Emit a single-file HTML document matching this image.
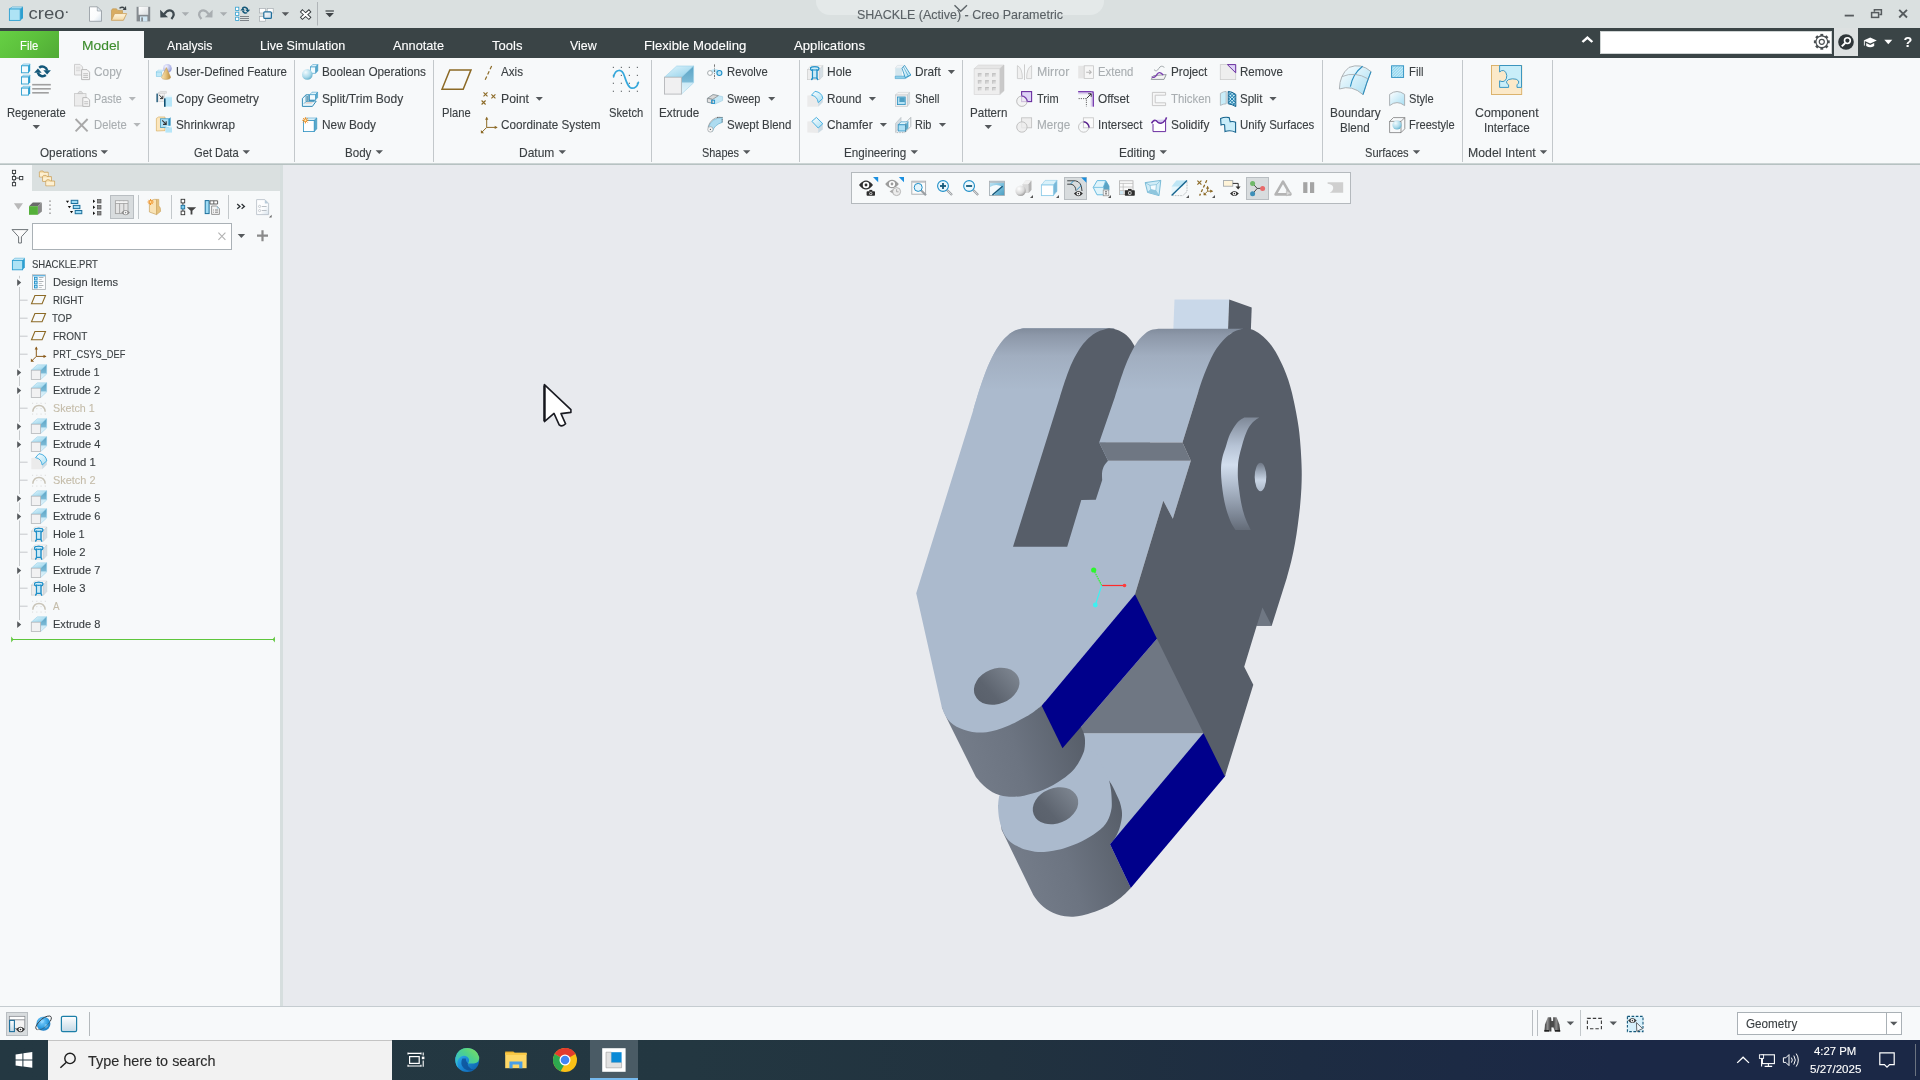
<!DOCTYPE html>
<html><head><meta charset="utf-8"><title>SHACKLE (Active) - Creo Parametric</title>
<style>
html,body{margin:0;padding:0;}
body{width:1920px;height:1080px;overflow:hidden;position:relative;background:#e8eaee;font-family:"Liberation Sans",sans-serif;}
.t{position:absolute;white-space:nowrap;line-height:20px;transform-origin:0 50%;-webkit-text-stroke:0.12px currentColor;font-family:"Liberation Sans",sans-serif;}
svg{position:absolute;left:0;top:0;}
</style></head><body>
<div id="app" style="position:absolute;left:0;top:0;width:1920px;height:1080px;overflow:hidden;will-change:transform">
<div style="position:absolute;left:0px;top:0px;width:1920px;height:28px;background:#dae0e0;"></div>
<div style="position:absolute;left:816px;top:-14px;width:288px;height:29px;background:#e4e9e9;border-radius:14px;"></div>
<div style="position:absolute;left:0px;top:28px;width:1920px;height:30px;background:#3a4446;"></div>
<div style="position:absolute;left:0px;top:31px;width:59px;height:27px;background:linear-gradient(135deg,#66d044 0%,#5cc03c 50%,#50aa36 100%);"></div>
<div style="position:absolute;left:59px;top:31px;width:85px;height:27px;background:#f7f9fa;"></div>
<div style="position:absolute;left:0px;top:58px;width:1920px;height:105px;background:#f7f9fa;"></div>
<div style="position:absolute;left:0px;top:163px;width:1920px;height:2px;background:linear-gradient(180deg,#dfe5e5 0%,#b4c0c0 55%,#b9c4c4 100%);"></div>
<div style="position:absolute;left:148px;top:60px;width:1px;height:102px;background:#c3c8cb;"></div>
<div style="position:absolute;left:294px;top:60px;width:1px;height:102px;background:#c3c8cb;"></div>
<div style="position:absolute;left:433px;top:60px;width:1px;height:102px;background:#c3c8cb;"></div>
<div style="position:absolute;left:651px;top:60px;width:1px;height:102px;background:#c3c8cb;"></div>
<div style="position:absolute;left:799px;top:60px;width:1px;height:102px;background:#c3c8cb;"></div>
<div style="position:absolute;left:962px;top:60px;width:1px;height:102px;background:#c3c8cb;"></div>
<div style="position:absolute;left:1322px;top:60px;width:1px;height:102px;background:#c3c8cb;"></div>
<div style="position:absolute;left:1462px;top:60px;width:1px;height:102px;background:#c3c8cb;"></div>
<div style="position:absolute;left:1552px;top:60px;width:1px;height:102px;background:#c3c8cb;"></div>
<div style="position:absolute;left:1600px;top:31px;width:232px;height:23px;background:#ffffff;border:1px solid #cfd4d4;box-sizing:border-box;"></div>
<div style="position:absolute;left:1834px;top:28px;width:24px;height:28px;background:#dde1e1;"></div>
<div style="position:absolute;left:0px;top:165px;width:280px;height:841px;background:#f7f9fa;"></div>
<div style="position:absolute;left:32px;top:165px;width:248px;height:26px;background:#dae0e0;"></div>
<div style="position:absolute;left:280px;top:165px;width:3px;height:841px;background:#d6dede;"></div>
<div style="position:absolute;left:110px;top:195px;width:24px;height:24px;background:#d8dcde;border:1px solid #b9bec2;box-sizing:border-box;"></div>
<div style="position:absolute;left:138px;top:195px;width:1px;height:24px;background:#c3c8cb;"></div>
<div style="position:absolute;left:171px;top:195px;width:1px;height:24px;background:#c3c8cb;"></div>
<div style="position:absolute;left:228px;top:195px;width:1px;height:24px;background:#c3c8cb;"></div>
<div style="position:absolute;left:32px;top:223px;width:200px;height:27px;background:#ffffff;border:1px solid #aab1b6;box-sizing:border-box;"></div>
<div style="position:absolute;left:283px;top:165px;width:1637px;height:841px;background:#e8eaee;"></div>
<div style="position:absolute;left:851px;top:172px;width:500px;height:32px;background:#f7f9fa;border:1px solid #b4b9bd;box-sizing:border-box;"></div>
<div style="position:absolute;left:1064px;top:177px;width:23px;height:23px;background:#d8dcde;border:1px solid #b9bec2;box-sizing:border-box;"></div>
<div style="position:absolute;left:1246px;top:177px;width:23px;height:23px;background:#d8dcde;border:1px solid #b9bec2;box-sizing:border-box;"></div>
<div style="position:absolute;left:0px;top:1006px;width:1920px;height:34px;background:#f7f9fa;"></div>
<div style="position:absolute;left:0px;top:1006px;width:1920px;height:1px;background:#c5ccd0;"></div>
<div style="position:absolute;left:6px;top:1012px;width:22px;height:24px;background:#d8dcde;border:1px solid #b9bec2;box-sizing:border-box;"></div>
<div style="position:absolute;left:89px;top:1012px;width:1px;height:24px;background:#b4b9bc;"></div>
<div style="position:absolute;left:1532px;top:1010px;width:1px;height:26px;background:#b9bec2;"></div>
<div style="position:absolute;left:1537px;top:1010px;width:1px;height:26px;background:#b9bec2;"></div>
<div style="position:absolute;left:1580px;top:1010px;width:1px;height:26px;background:#c3c8cb;"></div>
<div style="position:absolute;left:1737px;top:1012px;width:165px;height:23px;background:#ffffff;border:1px solid #aab1b6;box-sizing:border-box;"></div>
<div style="position:absolute;left:1886px;top:1013px;width:1px;height:21px;background:#aab1b6;"></div>
<div style="position:absolute;left:0px;top:1040px;width:1920px;height:40px;background:linear-gradient(90deg,#243842 0%,#233741 36%,#21323f 52%,#1d2c42 68%,#1b2846 84%,#1b2846 100%);"></div>
<div style="position:absolute;left:48px;top:1040px;width:344px;height:40px;background:#f2f2f2;border-top:1px solid #c4c4c4;box-sizing:border-box;"></div>
<div style="position:absolute;left:590px;top:1040px;width:48px;height:40px;background:#4a5b65;"></div>
<div style="position:absolute;left:590px;top:1078px;width:48px;height:2px;background:#76b9ed;"></div>
<div style="position:absolute;left:1915px;top:1044px;width:1px;height:32px;background:#6b7380;"></div>
<span class="t" style="left:857.0px;top:5.1px;font-size:12.2px;color:#5a6165;transform:scaleX(1.0246);">SHACKLE (Active) - Creo Parametric</span>
<span class="t" style="left:20.0px;top:35.5px;font-size:13.1px;color:#ffffff;transform:scaleX(0.8669);">File</span>
<span class="t" style="left:82.3px;top:35.5px;font-size:13.1px;color:#3c8c2c;transform:scaleX(1.0566);">Model</span>
<span class="t" style="left:167.3px;top:35.5px;font-size:13.1px;color:#ffffff;transform:scaleX(0.9307);">Analysis</span>
<span class="t" style="left:260.3px;top:35.5px;font-size:13.1px;color:#ffffff;transform:scaleX(0.9613);">Live Simulation</span>
<span class="t" style="left:393.3px;top:35.5px;font-size:13.1px;color:#ffffff;transform:scaleX(0.9724);">Annotate</span>
<span class="t" style="left:492.3px;top:35.5px;font-size:13.1px;color:#ffffff;transform:scaleX(0.9941);">Tools</span>
<span class="t" style="left:570.0px;top:35.5px;font-size:13.1px;color:#ffffff;transform:scaleX(0.9482);">View</span>
<span class="t" style="left:644.3px;top:35.5px;font-size:13.1px;color:#ffffff;transform:scaleX(1.0045);">Flexible Modeling</span>
<span class="t" style="left:794.0px;top:35.5px;font-size:13.1px;color:#ffffff;transform:scaleX(1.0051);">Applications</span>
<span class="t" style="left:7.3px;top:102.8px;font-size:12.2px;color:#3a3f42;transform:scaleX(0.9207);">Regenerate</span>
<span class="t" style="left:94.3px;top:61.8px;font-size:12.2px;color:#a9aeb1;transform:scaleX(0.9726);">Copy</span>
<span class="t" style="left:94.3px;top:88.8px;font-size:12.2px;color:#a9aeb1;transform:scaleX(0.8879);">Paste</span>
<span class="t" style="left:94.3px;top:114.8px;font-size:12.2px;color:#a9aeb1;transform:scaleX(0.9272);">Delete</span>
<span class="t" style="left:176.0px;top:61.8px;font-size:12.2px;color:#3a3f42;transform:scaleX(0.9462);">User-Defined Feature</span>
<span class="t" style="left:176.0px;top:88.8px;font-size:12.2px;color:#3a3f42;transform:scaleX(0.9716);">Copy Geometry</span>
<span class="t" style="left:176.0px;top:114.8px;font-size:12.2px;color:#3a3f42;transform:scaleX(0.9668);">Shrinkwrap</span>
<span class="t" style="left:322.0px;top:61.8px;font-size:12.2px;color:#3a3f42;transform:scaleX(0.9644);">Boolean Operations</span>
<span class="t" style="left:322.0px;top:88.8px;font-size:12.2px;color:#3a3f42;transform:scaleX(0.9884);">Split/Trim Body</span>
<span class="t" style="left:322.0px;top:114.8px;font-size:12.2px;color:#3a3f42;transform:scaleX(0.9712);">New Body</span>
<span class="t" style="left:442.3px;top:102.8px;font-size:12.2px;color:#3a3f42;transform:scaleX(0.9198);">Plane</span>
<span class="t" style="left:501.0px;top:61.8px;font-size:12.2px;color:#3a3f42;transform:scaleX(0.9545);">Axis</span>
<span class="t" style="left:501.0px;top:88.8px;font-size:12.2px;color:#3a3f42;transform:scaleX(1.0069);">Point</span>
<span class="t" style="left:501.0px;top:114.8px;font-size:12.2px;color:#3a3f42;transform:scaleX(0.9610);">Coordinate System</span>
<span class="t" style="left:609.0px;top:102.8px;font-size:12.2px;color:#3a3f42;transform:scaleX(0.9196);">Sketch</span>
<span class="t" style="left:659.0px;top:102.8px;font-size:12.2px;color:#3a3f42;transform:scaleX(0.9585);">Extrude</span>
<span class="t" style="left:727.3px;top:61.8px;font-size:12.2px;color:#3a3f42;transform:scaleX(0.9234);">Revolve</span>
<span class="t" style="left:727.3px;top:88.8px;font-size:12.2px;color:#3a3f42;transform:scaleX(0.8954);">Sweep</span>
<span class="t" style="left:727.3px;top:114.8px;font-size:12.2px;color:#3a3f42;transform:scaleX(0.9401);">Swept Blend</span>
<span class="t" style="left:827.3px;top:61.8px;font-size:12.2px;color:#3a3f42;transform:scaleX(0.9844);">Hole</span>
<span class="t" style="left:827.3px;top:88.8px;font-size:12.2px;color:#3a3f42;transform:scaleX(0.9569);">Round</span>
<span class="t" style="left:827.3px;top:114.8px;font-size:12.2px;color:#3a3f42;transform:scaleX(0.9769);">Chamfer</span>
<span class="t" style="left:915.3px;top:61.8px;font-size:12.2px;color:#3a3f42;transform:scaleX(0.9721);">Draft</span>
<span class="t" style="left:915.3px;top:88.8px;font-size:12.2px;color:#3a3f42;transform:scaleX(0.8994);">Shell</span>
<span class="t" style="left:915.3px;top:114.8px;font-size:12.2px;color:#3a3f42;transform:scaleX(0.8959);">Rib</span>
<span class="t" style="left:970.3px;top:102.8px;font-size:12.2px;color:#3a3f42;transform:scaleX(0.9508);">Pattern</span>
<span class="t" style="left:1036.7px;top:61.8px;font-size:12.2px;color:#a9aeb1;transform:scaleX(1.0142);">Mirror</span>
<span class="t" style="left:1036.7px;top:88.8px;font-size:12.2px;color:#3a3f42;transform:scaleX(0.9024);">Trim</span>
<span class="t" style="left:1036.7px;top:114.8px;font-size:12.2px;color:#a9aeb1;transform:scaleX(0.9630);">Merge</span>
<span class="t" style="left:1098.3px;top:61.8px;font-size:12.2px;color:#a9aeb1;transform:scaleX(0.9320);">Extend</span>
<span class="t" style="left:1098.3px;top:88.8px;font-size:12.2px;color:#3a3f42;transform:scaleX(0.9715);">Offset</span>
<span class="t" style="left:1098.3px;top:114.8px;font-size:12.2px;color:#3a3f42;transform:scaleX(0.9490);">Intersect</span>
<span class="t" style="left:1171.3px;top:61.8px;font-size:12.2px;color:#3a3f42;transform:scaleX(0.9586);">Project</span>
<span class="t" style="left:1171.3px;top:88.8px;font-size:12.2px;color:#a9aeb1;transform:scaleX(0.9364);">Thicken</span>
<span class="t" style="left:1171.3px;top:114.8px;font-size:12.2px;color:#3a3f42;transform:scaleX(0.9764);">Solidify</span>
<span class="t" style="left:1240.3px;top:61.8px;font-size:12.2px;color:#3a3f42;transform:scaleX(0.9465);">Remove</span>
<span class="t" style="left:1240.3px;top:88.8px;font-size:12.2px;color:#3a3f42;transform:scaleX(0.9438);">Split</span>
<span class="t" style="left:1240.3px;top:114.8px;font-size:12.2px;color:#3a3f42;transform:scaleX(0.9379);">Unify Surfaces</span>
<span class="t" style="left:1330.3px;top:102.8px;font-size:12.2px;color:#3a3f42;transform:scaleX(0.9708);">Boundary</span>
<span class="t" style="left:1340.3px;top:117.8px;font-size:12.2px;color:#3a3f42;transform:scaleX(0.9518);">Blend</span>
<span class="t" style="left:1409.3px;top:61.8px;font-size:12.2px;color:#3a3f42;transform:scaleX(0.9240);">Fill</span>
<span class="t" style="left:1409.3px;top:88.8px;font-size:12.2px;color:#3a3f42;transform:scaleX(0.9107);">Style</span>
<span class="t" style="left:1409.3px;top:114.8px;font-size:12.2px;color:#3a3f42;transform:scaleX(0.9109);">Freestyle</span>
<span class="t" style="left:1475.3px;top:102.8px;font-size:12.2px;color:#3a3f42;transform:scaleX(1.0099);">Component</span>
<span class="t" style="left:1484.3px;top:117.8px;font-size:12.2px;color:#3a3f42;transform:scaleX(0.9627);">Interface</span>
<span class="t" style="left:40.3px;top:142.8px;font-size:12.2px;color:#3a3f42;transform:scaleX(0.9618);">Operations</span>
<span class="t" style="left:194.3px;top:142.8px;font-size:12.2px;color:#3a3f42;transform:scaleX(0.9155);">Get Data</span>
<span class="t" style="left:345.3px;top:142.8px;font-size:12.2px;color:#3a3f42;transform:scaleX(0.9494);">Body</span>
<span class="t" style="left:519.3px;top:142.8px;font-size:12.2px;color:#3a3f42;transform:scaleX(0.9852);">Datum</span>
<span class="t" style="left:702.0px;top:142.8px;font-size:12.2px;color:#3a3f42;transform:scaleX(0.8942);">Shapes</span>
<span class="t" style="left:844.3px;top:142.8px;font-size:12.2px;color:#3a3f42;transform:scaleX(0.9583);">Engineering</span>
<span class="t" style="left:1119.3px;top:142.8px;font-size:12.2px;color:#3a3f42;transform:scaleX(0.9758);">Editing</span>
<span class="t" style="left:1365.3px;top:142.8px;font-size:12.2px;color:#3a3f42;transform:scaleX(0.9077);">Surfaces</span>
<span class="t" style="left:1468.3px;top:142.8px;font-size:12.2px;color:#3a3f42;transform:scaleX(1.0083);">Model Intent</span>
<span class="t" style="left:32.3px;top:254.1px;font-size:10.8px;color:#3a3f42;transform:scaleX(0.8807);">SHACKLE.PRT</span>
<span class="t" style="left:52.5px;top:272.1px;font-size:10.8px;color:#3a3f42;transform:scaleX(1.0314);">Design Items</span>
<span class="t" style="left:52.5px;top:290.1px;font-size:10.8px;color:#3a3f42;transform:scaleX(0.9048);">RIGHT</span>
<span class="t" style="left:52.1px;top:308.1px;font-size:10.8px;color:#3a3f42;transform:scaleX(0.9088);">TOP</span>
<span class="t" style="left:52.5px;top:326.1px;font-size:10.8px;color:#3a3f42;transform:scaleX(0.9249);">FRONT</span>
<span class="t" style="left:52.5px;top:344.1px;font-size:10.8px;color:#3a3f42;transform:scaleX(0.8575);">PRT_CSYS_DEF</span>
<span class="t" style="left:52.5px;top:362.1px;font-size:10.8px;color:#3a3f42;transform:scaleX(1.0081);">Extrude 1</span>
<span class="t" style="left:52.5px;top:380.1px;font-size:10.8px;color:#3a3f42;transform:scaleX(1.0189);">Extrude 2</span>
<span class="t" style="left:52.5px;top:398.1px;font-size:10.8px;color:#c4bca9;transform:scaleX(0.9923);">Sketch 1</span>
<span class="t" style="left:52.5px;top:416.1px;font-size:10.8px;color:#3a3f42;transform:scaleX(1.0232);">Extrude 3</span>
<span class="t" style="left:52.5px;top:434.1px;font-size:10.8px;color:#3a3f42;transform:scaleX(1.0232);">Extrude 4</span>
<span class="t" style="left:52.5px;top:452.1px;font-size:10.8px;color:#3a3f42;transform:scaleX(1.0457);">Round 1</span>
<span class="t" style="left:52.5px;top:470.1px;font-size:10.8px;color:#c4bca9;transform:scaleX(1.0113);">Sketch 2</span>
<span class="t" style="left:52.5px;top:488.1px;font-size:10.8px;color:#3a3f42;transform:scaleX(1.0232);">Extrude 5</span>
<span class="t" style="left:52.5px;top:506.1px;font-size:10.8px;color:#3a3f42;transform:scaleX(1.0232);">Extrude 6</span>
<span class="t" style="left:52.5px;top:524.1px;font-size:10.8px;color:#3a3f42;transform:scaleX(1.0154);">Hole 1</span>
<span class="t" style="left:52.5px;top:542.1px;font-size:10.8px;color:#3a3f42;transform:scaleX(1.0410);">Hole 2</span>
<span class="t" style="left:52.5px;top:560.1px;font-size:10.8px;color:#3a3f42;transform:scaleX(1.0232);">Extrude 7</span>
<span class="t" style="left:52.5px;top:578.1px;font-size:10.8px;color:#3a3f42;transform:scaleX(1.0410);">Hole 3</span>
<span class="t" style="left:52.5px;top:596.1px;font-size:10.8px;color:#c4bca9;transform:scaleX(0.9023);">A</span>
<span class="t" style="left:52.5px;top:614.1px;font-size:10.8px;color:#3a3f42;transform:scaleX(1.0232);">Extrude 8</span>
<span class="t" style="left:1745.5px;top:1013.5px;font-size:12.2px;color:#3a3f42;transform:scaleX(0.9597);">Geometry</span>
<span class="t" style="left:88.2px;top:1050.9px;font-size:14.5px;color:#2b2b2b;transform:scaleX(0.9941);">Type here to search</span>
<span class="t" style="left:1813.9px;top:1041.0px;font-size:11.6px;color:#ffffff;transform:scaleX(0.9792);">4:27 PM</span>
<span class="t" style="left:1809.6px;top:1058.7px;font-size:11.6px;color:#ffffff;transform:scaleX(0.9960);">5/27/2025</span>
<svg width="1920" height="1080" viewBox="0 0 1920 1080">
<defs>
<linearGradient id="gTop" gradientUnits="userSpaceOnUse" x1="0" y1="328" x2="0" y2="390"><stop offset="0" stop-color="#808b9b"/><stop offset="0.12" stop-color="#8d98a9"/><stop offset="0.45" stop-color="#a1aec0"/><stop offset="1" stop-color="#abbacd"/></linearGradient>
<linearGradient id="gBoss" gradientUnits="userSpaceOnUse" x1="0" y1="417" x2="0" y2="531"><stop offset="0" stop-color="#7d8796"/><stop offset="0.25" stop-color="#b6c3d5"/><stop offset="0.42" stop-color="#d2deee"/><stop offset="0.6" stop-color="#b0bccd"/><stop offset="0.85" stop-color="#7f8998"/><stop offset="1" stop-color="#626a76"/></linearGradient>
<linearGradient id="gHole3" gradientUnits="userSpaceOnUse" x1="0" y1="462" x2="0" y2="492"><stop offset="0" stop-color="#6a7280"/><stop offset="0.3" stop-color="#9aa6b6"/><stop offset="0.6" stop-color="#c9d5e5"/><stop offset="1" stop-color="#aab6c7"/></linearGradient>
<linearGradient id="gCyl1" gradientUnits="userSpaceOnUse" x1="955" y1="760" x2="1085" y2="722"><stop offset="0" stop-color="#757d8a"/><stop offset="0.45" stop-color="#6c7481"/><stop offset="1" stop-color="#565d68"/></linearGradient>
<linearGradient id="gCyl2" gradientUnits="userSpaceOnUse" x1="1015" y1="880" x2="1135" y2="845"><stop offset="0" stop-color="#757d8a"/><stop offset="0.45" stop-color="#6c7481"/><stop offset="1" stop-color="#575e69"/></linearGradient>
<linearGradient id="gH1" gradientUnits="userSpaceOnUse" x1="976" y1="694" x2="1018" y2="678"><stop offset="0" stop-color="#5a616c"/><stop offset="0.3" stop-color="#5d646f"/><stop offset="1" stop-color="#7c848f"/></linearGradient>
<linearGradient id="gH2" gradientUnits="userSpaceOnUse" x1="1035" y1="814" x2="1077" y2="798"><stop offset="0" stop-color="#5a616c"/><stop offset="0.3" stop-color="#5d646f"/><stop offset="1" stop-color="#7c848f"/></linearGradient>
</defs>
<g>
<polygon points="1174.5,299.5 1229.2,299.5 1228,330 1173.3,330" fill="#c9d8e9"/>
<polygon points="1229.2,299.5 1251.7,307.5 1250.8,332 1228,331" fill="#575e69"/>
<polygon points="1070,733.3 1205.5,733.3 1205.5,737 1110,844.2 1100,800 1075,760" fill="#abbacd"/>
<polygon points="1158,637.5 1205.5,733.3 1070,733.3 1062.5,748.3" fill="#6f7783"/>
<path d="M998.3,805.0 L1001.7,830.0 L1033.3,895.0 C1034.1,896.1 1036.3,899.5 1038.0,901.5 C1039.7,903.5 1041.4,905.1 1043.3,906.7 C1045.2,908.3 1047.3,909.8 1049.5,911.0 C1051.7,912.2 1054.1,913.3 1056.7,914.2 C1059.3,915.1 1062.2,915.9 1065.0,916.3 C1067.8,916.7 1070.5,916.8 1073.3,916.7 C1076.1,916.6 1079.2,916.2 1082.0,915.6 C1084.8,915.0 1087.0,914.3 1090.0,913.3 C1093.0,912.3 1096.7,911.1 1100.0,909.7 C1103.3,908.3 1106.5,907.0 1110.0,905.0 C1113.5,903.0 1117.5,900.3 1121.0,897.5 C1124.5,894.7 1129.2,889.6 1130.8,888.0 L1110.0,844.2 C1110.7,843.4 1112.9,841.0 1114.0,839.5 C1115.1,838.0 1115.8,836.8 1116.7,835.0 C1117.6,833.2 1118.6,831.0 1119.3,829.0 C1120.0,827.0 1120.4,825.3 1120.8,823.3 C1121.2,821.3 1121.8,819.2 1121.9,817.0 C1122.1,814.8 1122.1,812.5 1121.7,810.0 C1121.3,807.5 1120.6,804.5 1119.8,802.0 C1119.0,799.5 1117.8,797.4 1116.7,795.0 C1115.6,792.6 1114.5,789.9 1113.2,787.5 C1112.0,785.1 1109.9,781.9 1109.2,780.8 Z" fill="url(#gCyl2)"/>
<path d="M999.2,795.8 C999.0,797.1 998.4,800.9 998.2,803.5 C998.1,806.1 998.1,808.9 998.3,811.7 C998.5,814.5 998.9,817.7 999.5,820.5 C1000.1,823.3 1000.9,825.9 1001.7,828.3 C1002.5,830.7 1003.4,832.8 1004.5,834.8 C1005.6,836.8 1006.9,838.5 1008.3,840.0 C1009.7,841.5 1011.1,842.7 1012.8,843.8 C1014.5,844.9 1016.1,845.7 1018.3,846.7 C1020.5,847.7 1023.2,849.0 1026.0,849.8 C1028.8,850.6 1032.0,851.3 1035.0,851.7 C1038.0,852.1 1041.0,852.1 1044.0,852.0 C1047.0,851.9 1050.0,851.4 1053.3,850.8 C1056.5,850.2 1060.2,849.6 1063.5,848.6 C1066.8,847.6 1070.2,846.2 1073.3,845.0 C1076.4,843.8 1079.2,842.6 1082.0,841.2 C1084.8,839.8 1087.5,838.2 1090.0,836.7 C1092.5,835.2 1094.8,833.7 1097.0,832.0 C1099.2,830.3 1101.6,828.5 1103.3,826.7 C1105.0,824.9 1106.2,823.2 1107.3,821.3 C1108.4,819.3 1109.3,817.2 1110.0,815.0 C1110.7,812.8 1111.3,810.5 1111.6,808.0 C1111.9,805.5 1111.8,803.0 1111.7,800.0 C1111.6,797.0 1111.4,793.2 1111.0,790.0 C1110.6,786.8 1109.5,782.3 1109.2,780.8 L1095.0,750.0 L1040.0,770.0 Z" fill="#abbacd"/>
<path d="M941.7,706.7 L946.7,718.3 L975.8,776.7 C976.7,777.8 979.2,781.1 981.0,783.0 C982.8,784.9 984.8,786.8 986.7,788.3 C988.6,789.8 990.4,791.1 992.5,792.2 C994.6,793.3 996.8,794.3 999.2,795.0 C1001.6,795.7 1004.4,796.3 1007.0,796.6 C1009.6,796.9 1012.2,796.9 1015.0,796.7 C1017.8,796.6 1021.0,796.3 1024.0,795.7 C1027.0,795.1 1030.0,794.3 1033.3,793.3 C1036.5,792.3 1040.2,791.1 1043.5,789.7 C1046.8,788.3 1050.0,786.8 1053.3,785.0 C1056.5,783.2 1059.9,781.0 1063.0,778.8 C1066.1,776.6 1069.3,774.1 1071.7,771.7 C1074.1,769.3 1075.8,767.0 1077.5,764.5 C1079.2,762.0 1080.6,759.1 1081.7,756.7 C1082.8,754.3 1083.8,752.2 1084.3,750.0 C1084.8,747.8 1084.9,745.5 1085.0,743.3 C1085.1,741.1 1085.0,738.9 1084.7,737.0 C1084.4,735.1 1083.5,732.6 1083.3,731.7 L1075.0,715.0 L1041.7,700.0 Z" fill="url(#gCyl1)"/>
<path d="M1109.2,328.3 L1023.3,328.3 C1021.9,328.7 1017.5,329.5 1015.0,330.6 C1012.5,331.7 1010.5,333.1 1008.3,335.0 C1006.1,336.9 1003.9,338.9 1001.7,341.7 C999.5,344.5 997.1,348.1 995.0,351.7 C992.9,355.3 991.2,358.9 989.2,363.3 C987.2,367.7 985.1,373.3 983.3,378.3 C981.5,383.3 980.0,388.0 978.3,393.3 C976.6,398.6 974.1,407.2 973.3,410.0 L916.2,593.3 L941.7,706.7 C942.2,707.9 943.4,711.8 944.5,714.0 C945.6,716.2 946.8,718.2 948.3,720.0 C949.8,721.8 951.5,723.4 953.5,724.8 C955.5,726.2 957.6,727.3 960.0,728.3 C962.4,729.3 965.2,730.3 968.0,731.0 C970.8,731.7 973.6,732.3 976.7,732.5 C979.8,732.7 983.2,732.6 986.5,732.2 C989.8,731.8 993.3,731.0 996.7,730.0 C1000.1,729.0 1003.7,727.7 1007.0,726.3 C1010.3,724.9 1013.8,723.2 1016.7,721.7 C1019.6,720.2 1022.0,719.0 1024.5,717.6 C1027.0,716.2 1028.8,715.3 1031.7,713.3 C1034.6,711.3 1040.0,707.0 1041.7,705.8 L1135.0,594.2 L1163.3,500.8 L1172.8,518.7 L1190.8,460.8 L1108.0,460.8 L1100.0,400.0 Z" fill="#abbacd"/>
<path d="M1115.0,328.3 L1023.3,328.3 C1021.9,328.7 1017.5,329.5 1015.0,330.6 C1012.5,331.7 1010.5,333.1 1008.3,335.0 C1006.1,336.9 1003.9,338.9 1001.7,341.7 C999.5,344.5 997.1,348.1 995.0,351.7 C992.9,355.3 991.2,358.9 989.2,363.3 C987.2,367.7 985.1,373.3 983.3,378.3 C981.5,383.3 980.0,388.0 978.3,393.3 C976.6,398.6 974.1,407.2 973.3,410.0 L1060.0,410.0 L1090.0,340.0 Z" fill="url(#gTop)"/>
<path d="M1109.2,328.3 C1110.3,328.5 1113.9,329.0 1116.0,329.6 C1118.1,330.2 1120.0,331.1 1121.7,332.0 C1123.5,332.9 1125.0,334.0 1126.5,335.3 C1128.0,336.6 1129.4,338.1 1130.8,340.0 C1132.2,341.9 1134.3,345.6 1135.0,346.7 L1150.0,346.0 L1150.0,442.5 L1099.2,442.5 L1108.0,460.8 C1107.3,461.7 1105.0,464.2 1104.0,466.0 C1103.0,467.8 1102.5,470.0 1102.2,471.7 C1101.9,473.4 1102.0,474.6 1102.0,476.0 C1102.0,477.4 1102.2,479.3 1102.2,480.0 L1095.8,499.7 L1081.3,500.0 L1067.2,546.8 L1013.0,546.8 L1060.0,396.7 C1060.7,394.5 1062.8,387.5 1064.2,383.3 C1065.6,379.1 1066.8,375.6 1068.3,371.7 C1069.8,367.8 1071.3,363.9 1073.3,360.0 C1075.2,356.1 1077.8,351.6 1080.0,348.3 C1082.2,345.0 1084.2,342.5 1086.7,340.0 C1089.2,337.5 1092.5,334.9 1095.0,333.3 C1097.5,331.7 1099.3,331.1 1101.7,330.3 C1104.1,329.5 1108.0,328.6 1109.2,328.3 Z" fill="#575e69"/>
<path d="M1243.3,328.7 L1158.3,328.7 C1157.1,328.9 1153.2,329.2 1151.0,330.0 C1148.8,330.8 1146.9,332.2 1145.0,333.7 C1143.1,335.2 1141.2,337.0 1139.5,339.0 C1137.8,341.0 1136.6,342.8 1135.0,345.5 C1133.4,348.2 1131.7,351.5 1130.0,355.0 C1128.3,358.5 1126.7,362.4 1125.0,366.7 C1123.3,371.0 1121.7,376.0 1120.0,381.0 C1118.3,386.0 1115.8,394.1 1115.0,396.7 L1099.2,442.5 L1182.5,442.5 L1198.3,391.7 L1230.0,334.0 Z" fill="url(#gTop)"/>
<polygon points="1099.2,442.5 1182.5,442.5 1190.8,460.8 1108,460.8" fill="#6f7783"/>
<polygon points="1135,594.2 1137.2,594.2 1158,637.5 1062.5,748.3 1041.7,705.8" fill="#00008b"/>
<polygon points="1203.3,733.3 1205.5,733.3 1225.2,775.4 1224.9,776.5 1130.8,888 1110,844.2" fill="#00008b"/>
<path d="M1243.3,328.7 C1244.2,328.7 1246.8,328.7 1248.5,328.9 C1250.2,329.1 1251.4,329.1 1253.3,330.0 C1255.2,330.9 1257.8,332.3 1260.0,334.0 C1262.2,335.7 1264.6,337.8 1266.7,340.0 C1268.8,342.2 1270.9,344.7 1272.8,347.5 C1274.7,350.3 1276.5,353.3 1278.3,356.7 C1280.1,360.1 1282.0,364.1 1283.7,368.0 C1285.4,371.9 1286.9,375.8 1288.3,380.0 C1289.7,384.2 1290.9,388.6 1292.0,393.0 C1293.1,397.4 1294.1,402.4 1295.0,406.7 C1295.9,411.0 1296.6,414.8 1297.3,419.0 C1298.0,423.2 1298.6,426.5 1299.2,431.7 C1299.8,436.9 1300.4,443.6 1300.8,450.0 C1301.2,456.4 1301.6,463.7 1301.7,470.0 C1301.8,476.3 1301.7,481.9 1301.4,488.0 C1301.1,494.1 1300.6,500.5 1300.0,506.7 C1299.4,512.9 1298.6,518.9 1297.8,525.0 C1297.0,531.1 1296.1,537.3 1295.0,543.3 C1293.9,549.3 1292.7,555.2 1291.3,561.0 C1289.9,566.8 1287.5,575.4 1286.7,578.3 L1271.7,625.8 L1256.7,625.8 L1244.2,666.7 L1253.3,684.7 L1224.9,776.5 L1135.0,594.2 L1163.3,500.8 L1172.8,518.7 L1190.8,460.8 L1182.5,442.5 L1198.3,391.7 C1199.0,389.7 1200.9,383.4 1202.3,379.5 C1203.7,375.6 1205.2,371.9 1206.7,368.3 C1208.2,364.7 1209.6,361.1 1211.3,357.8 C1213.0,354.5 1214.8,351.2 1216.7,348.3 C1218.7,345.4 1220.8,342.9 1223.0,340.5 C1225.2,338.1 1227.8,335.8 1230.0,334.2 C1232.2,332.6 1234.3,331.5 1236.5,330.6 C1238.7,329.7 1242.2,329.0 1243.3,328.7 Z" fill="#575e69"/>
<polygon points="1262.5,607.5 1271.7,625.8 1256.7,625.8" fill="#6f7783"/>
<path d="M1244.2,417.5 L1259.2,417.5 C1258.2,418.2 1254.8,420.2 1253.0,422.0 C1251.2,423.8 1249.7,425.8 1248.3,428.3 C1246.9,430.8 1245.7,433.9 1244.6,437.0 C1243.5,440.1 1242.6,443.5 1241.7,446.7 C1240.8,449.9 1239.9,452.9 1239.3,456.0 C1238.7,459.1 1238.2,461.3 1238.0,465.0 C1237.8,468.7 1237.7,473.8 1237.9,478.0 C1238.1,482.2 1238.7,486.2 1239.2,490.0 C1239.7,493.8 1240.1,497.4 1240.8,501.0 C1241.5,504.6 1242.3,508.4 1243.3,511.7 C1244.2,515.0 1245.2,518.0 1246.5,521.0 C1247.8,524.0 1250.1,528.5 1250.8,530.0 L1235.5,530.0 C1234.8,528.8 1232.3,525.3 1231.0,522.5 C1229.7,519.7 1228.6,516.7 1227.5,513.3 C1226.4,509.9 1225.3,505.9 1224.5,502.0 C1223.7,498.1 1223.0,494.2 1222.5,490.0 C1222.0,485.8 1221.4,481.2 1221.2,477.0 C1221.0,472.8 1220.9,468.7 1221.2,465.0 C1221.5,461.3 1222.2,458.1 1223.0,455.0 C1223.8,451.9 1224.8,449.8 1225.8,446.7 C1226.8,443.6 1227.8,439.6 1229.0,436.5 C1230.2,433.4 1231.8,430.8 1233.3,428.3 C1234.8,425.8 1236.5,423.3 1238.3,421.5 C1240.1,419.7 1243.2,418.2 1244.2,417.5 Z" fill="url(#gBoss)"/>
<ellipse cx="1260.5" cy="477" rx="5.8" ry="14.2" fill="url(#gHole3)"/>
<ellipse cx="996.7" cy="686.3" rx="23.5" ry="17.6" transform="rotate(-22 996.7 686.3)" fill="url(#gH1)"/>
<ellipse cx="1055.5" cy="805.8" rx="23.5" ry="17.6" transform="rotate(-22 1055.5 805.8)" fill="url(#gH2)"/>
<line x1="1101.7" y1="585.5" x2="1124.5" y2="585.5" stroke="#ff2a2a" stroke-width="1.2"/><circle cx="1124.5" cy="585.5" r="1.8" fill="#ff3b3b"/>
<line x1="1101.7" y1="585.5" x2="1093.7" y2="570" stroke="#2cf72c" stroke-width="1.2" stroke-dasharray="1.5 0.8"/><circle cx="1093.7" cy="570" r="2.6" fill="#2cf72c"/>
<line x1="1101.7" y1="585.5" x2="1095.3" y2="605" stroke="#3df0f0" stroke-width="1.2"/><circle cx="1095.3" cy="605" r="2.4" fill="#3df0f0"/>
</g>
<path d="M544.4,384.6 L544.4,421.6 L554,413.4 L559.2,424.8 Q562.2,427.2 565.6,423.8 L561,413.6 L570.9,412.4 L570.9,409.6 Z" fill="#ffffff" stroke="#1a1b22" stroke-width="1.6" stroke-linejoin="round"/><path d="M544.5,385.5 L544.5,421" stroke="#15161c" stroke-width="2.3"/>
<defs>
<linearGradient id="gPage" x1="0" y1="0" x2="1" y2="1"><stop offset="0" stop-color="#ffffff"/><stop offset="0.6" stop-color="#fbfcfd"/><stop offset="1" stop-color="#d6e2ec"/></linearGradient>
<linearGradient id="gFold" x1="0" y1="0" x2="0" y2="1"><stop offset="0" stop-color="#fff6e0"/><stop offset="1" stop-color="#f3d9a6"/></linearGradient>
<linearGradient id="gSave" x1="0" y1="0" x2="1" y2="1"><stop offset="0" stop-color="#ffffff"/><stop offset="1" stop-color="#d9dde0"/></linearGradient>
<linearGradient id="gWin" x1="0" y1="0" x2="1" y2="1"><stop offset="0" stop-color="#ffffff"/><stop offset="1" stop-color="#c8d8e6"/></linearGradient>
</defs>
<polygon points="9.4,9 12.2,7 23,7 20.2,9" fill="#d4f0fa" stroke="#2d9fd0" stroke-width="0.6"/>
<polygon points="20.2,9 23,7 23,18.3 20.2,20.4" fill="#2d9fd0"/>
<rect x="9.4" y="9" width="10.8" height="11.4" fill="#aee3f5" stroke="#2d9fd0" stroke-width="0.9"/>
<text x="28.6" y="18.6" font-family="Liberation Sans, sans-serif" font-size="15.6" fill="#4d5357" textLength="36" lengthAdjust="spacingAndGlyphs">creo</text>
<circle cx="66.8" cy="12.2" r="0.9" fill="#4d5357"/>
<path d="M89.5,6.8 L97.3,6.8 L101.5,11 L101.5,21.3 L89.5,21.3 Z" fill="url(#gPage)" stroke="#9aa0a6" stroke-width="0.9"/>
<path d="M97.3,6.8 L97.3,11 L101.5,11 Z" fill="#dfe8f0" stroke="#9aa0a6" stroke-width="0.7"/>
<path d="M111.5,10.2 L112.5,8.8 L116.5,8.8 L117.8,10.4 L122.5,10.4 L122.5,13.2 L111.5,19.8 Z" fill="#d9ad62" stroke="#c0934a" stroke-width="0.6"/>
<path d="M111.4,20.3 L114.6,13.6 L126.6,13.6 L123.4,20.3 Z" fill="url(#gFold)" stroke="#c99b50" stroke-width="0.8"/>
<path d="M119.5,8.3 Q122.5,6.2 124.3,8.4" fill="none" stroke="#3c4448" stroke-width="1.3"/><polygon points="122.6,9.9 126.3,9.9 126.0,6.0" fill="#3c4448"/>
<rect x="136.6" y="6.8" width="13.6" height="14.6" fill="#858b90"/>
<rect x="138.6" y="6.8" width="9.6" height="8" fill="url(#gSave)"/>
<rect x="140" y="16.4" width="7.4" height="5" fill="#cfe5f2"/>
<rect x="141.2" y="17.4" width="1.8" height="4" fill="#858b90"/>
<g transform="translate(159.8,0)"><path d="M4.2,14.3 Q8.5,8.6 12.6,11.4 Q15.6,14.4 11.6,19" fill="none" stroke="#3f4a50" stroke-width="2.2"/><polygon points="0.3,9.8 0.6,17.6 8.2,17.2" fill="#3f4a50"/></g>
<polygon points="181.7,12.2 189.1,12.2 185.4,16.1" fill="#a9aeb1"/>
<g transform="translate(213,0) scale(-1,1)"><path d="M4.2,14.3 Q8.5,8.6 12.6,11.4 Q15.6,14.4 11.6,19" fill="none" stroke="#a9aeb1" stroke-width="2.2"/><polygon points="0.3,9.8 0.6,17.6 8.2,17.2" fill="#a9aeb1"/></g>
<polygon points="219.9,12.2 227.3,12.2 223.6,16.1" fill="#a9aeb1"/>
<rect x="235.6" y="7.2" width="3.2" height="3.2" fill="#ffffff" stroke="#2d9fd0" stroke-width="0.8"/>
<rect x="235.6" y="12.2" width="3.2" height="3.2" fill="#ffffff" stroke="#2d9fd0" stroke-width="0.8"/>
<rect x="235.6" y="17.2" width="3.2" height="3.2" fill="#ffffff" stroke="#2d9fd0" stroke-width="0.8"/>
<path d="M242.4,8.4 A3,3 0 0 1 247.7,10.2" fill="none" stroke="#14587a" stroke-width="1.6"/><polygon points="245.3,9.8 250.1,9.8 247.7,12.6" fill="#14587a"/>
<path d="M247,12.6 A3,3 0 0 1 242.7,10.8" fill="none" stroke="#14587a" stroke-width="1.6"/><polygon points="240.3,10.6 245.1,10.6 242.7,7.8" fill="#14587a"/>
<rect x="240" y="16" width="9" height="1" fill="#7d8388"/>
<rect x="240" y="18" width="9" height="1" fill="#7d8388"/>
<rect x="240" y="20" width="9" height="1" fill="#7d8388"/>
<rect x="259.6" y="8.4" width="6" height="4.6" fill="#ffffff" stroke="#a5abb0" stroke-width="0.7"/>
<rect x="267.2" y="8.4" width="6" height="4.6" fill="#ffffff" stroke="#a5abb0" stroke-width="0.7"/>
<rect x="259.6" y="16.6" width="6" height="4.6" fill="#ffffff" stroke="#a5abb0" stroke-width="0.7"/>
<rect x="263.8" y="11.8" width="7.6" height="6.6" rx="1" fill="url(#gWin)" stroke="#1f6f9c" stroke-width="1.2"/>
<polygon points="281.7,12.2 289.1,12.2 285.4,16.1" fill="#55595c"/>
<path d="M302.5,11.8 L308.8,17.4 M308.8,11.8 L302.5,17.4" stroke="#33383b" stroke-width="3.8" stroke-linecap="square"/>
<path d="M302.5,11.8 L308.8,17.4 M308.8,11.8 L302.5,17.4" stroke="#ffffff" stroke-width="2" stroke-linecap="square"/>
<rect x="317" y="2" width="1" height="23.5" fill="#b0b5b8"/>
<rect x="325.5" y="10.4" width="8.4" height="1.2" fill="#3f4447"/>
<polygon points="325.5,13.0 333.9,13.0 329.7,17.2" fill="#3f4447"/>
<path d="M954.5,5.2 L960.7,11.3 L967,5.2" fill="none" stroke="#5d6468" stroke-width="1.4"/>
<rect x="1844.7" y="14.7" width="9.2" height="1.8" fill="#565b5e"/>
<path d="M1874.4,11.8 L1874.4,9.8 L1881.4,9.8 L1881.4,14.4 L1879.4,14.4" fill="none" stroke="#565b5e" stroke-width="1.5"/><rect x="1871.6" y="12.6" width="7" height="4.8" fill="none" stroke="#565b5e" stroke-width="1.5"/>
<path d="M1899.2,9.9 L1907,17.5 M1907,9.9 L1899.2,17.5" stroke="#565b5e" stroke-width="1.9"/>
<defs>
<linearGradient id="gExTop" x1="0" y1="0" x2="1" y2="1"><stop offset="0" stop-color="#e2f5fc"/><stop offset="1" stop-color="#8fd0ea"/></linearGradient>
<linearGradient id="gExSide" x1="0" y1="0" x2="0" y2="1"><stop offset="0" stop-color="#5aa3c4"/><stop offset="0.55" stop-color="#7bbad6"/><stop offset="0.62" stop-color="#cdeaf6"/><stop offset="1" stop-color="#e6f6fc"/></linearGradient>
<radialGradient id="gSph" cx="0.35" cy="0.3" r="0.8"><stop offset="0" stop-color="#f2fbfe"/><stop offset="0.6" stop-color="#a9d9ea"/><stop offset="1" stop-color="#5aa9c6"/></radialGradient>
<radialGradient id="gSphL" cx="0.35" cy="0.3" r="0.8"><stop offset="0" stop-color="#f4f4ff"/><stop offset="0.7" stop-color="#aeb4e6"/><stop offset="1" stop-color="#8088c8"/></radialGradient>
<radialGradient id="gSphG" cx="0.35" cy="0.3" r="0.8"><stop offset="0" stop-color="#ffffff"/><stop offset="0.6" stop-color="#d8d8d8"/><stop offset="1" stop-color="#8c8c8c"/></radialGradient>
<linearGradient id="gCone" x1="0" y1="0" x2="1" y2="0"><stop offset="0" stop-color="#f7e4b8"/><stop offset="0.5" stop-color="#e4c07a"/><stop offset="1" stop-color="#b98c3c"/></linearGradient>
<linearGradient id="gLB" x1="0" y1="0" x2="1" y2="1"><stop offset="0" stop-color="#ffffff"/><stop offset="1" stop-color="#a6def3"/></linearGradient>
<linearGradient id="gGray" x1="0" y1="0" x2="1" y2="1"><stop offset="0" stop-color="#f7f7f7"/><stop offset="1" stop-color="#dcdcdc"/></linearGradient>
<linearGradient id="gPurp" x1="0" y1="0" x2="0" y2="1"><stop offset="0" stop-color="#8a5cc0"/><stop offset="1" stop-color="#ffffff" stop-opacity="0"/></linearGradient>
<linearGradient id="gPurpR" x1="1" y1="0" x2="0" y2="0"><stop offset="0" stop-color="#8a5cc0"/><stop offset="1" stop-color="#ffffff" stop-opacity="0"/></linearGradient>
<pattern id="hatch" width="2" height="2" patternUnits="userSpaceOnUse" patternTransform="rotate(45)"><rect width="2" height="2" fill="#c6ecf9"/><rect width="0.8" height="2" fill="#7fcdea"/></pattern>
<pattern id="xhatch" width="2.4" height="2.4" patternUnits="userSpaceOnUse" patternTransform="rotate(45)"><rect width="2.4" height="2.4" fill="#cdeef9"/><rect width="0.8" height="2.4" fill="#1f7fae"/><rect width="2.4" height="0.8" fill="#1f7fae"/></pattern>
</defs>
<polygon points="21.5,65.8 23.2,64.0 30.2,64.0 28.5,65.8" fill="#dff4fb" stroke="#2d9fd0" stroke-width="0.5"/>
<polygon points="28.5,65.8 30.2,64.0 30.2,71.0 28.5,72.8" fill="#2d9fd0"/>
<rect x="21.5" y="65.8" width="7" height="7" fill="#f4fbfe" stroke="#2d9fd0" stroke-width="0.9"/>
<polygon points="21.5,77.0 23.2,75.2 30.2,75.2 28.5,77.0" fill="#dff4fb" stroke="#2d9fd0" stroke-width="0.5"/>
<polygon points="28.5,77.0 30.2,75.2 30.2,82.2 28.5,84.0" fill="#2d9fd0"/>
<rect x="21.5" y="77.0" width="7" height="7" fill="#f4fbfe" stroke="#2d9fd0" stroke-width="0.9"/>
<polygon points="21.5,88.1 23.2,86.3 30.2,86.3 28.5,88.1" fill="#dff4fb" stroke="#2d9fd0" stroke-width="0.5"/>
<polygon points="28.5,88.1 30.2,86.3 30.2,93.3 28.5,95.1" fill="#2d9fd0"/>
<rect x="21.5" y="88.1" width="7" height="7" fill="#f4fbfe" stroke="#2d9fd0" stroke-width="0.9"/>
<path d="M39.2,67.7 A5,5 0 0 1 47.2,70.6" fill="none" stroke="#14587a" stroke-width="2.5"/><polygon points="43.3,70.3 50.9,70.3 47.1,74.5" fill="#14587a"/>
<path d="M45.8,75 A5,5 0 0 1 37.8,72.6" fill="none" stroke="#14587a" stroke-width="2.5"/><polygon points="34.1,72.8 41.7,72.8 37.9,68.5" fill="#14587a"/>
<rect x="32.2" y="83.9" width="18.6" height="1.6" fill="#a0a0a0"/>
<rect x="32.2" y="88.0" width="18.6" height="1.6" fill="#a0a0a0"/>
<rect x="32.2" y="92.0" width="16.6" height="1.6" fill="#a0a0a0"/>
<polygon points="32.6,125.1 40.0,125.1 36.3,128.9" fill="#55595c"/>
<path d="M74.5,64.4 L80,64.4 L82.6,67 L82.6,75 L74.5,75 Z" fill="#f0f0f0" stroke="#c4c4c4" stroke-width="0.8"/>
<path d="M81.6,69.6 L87,69.6 L89.6,72.2 L89.6,79.6 L81.6,79.6 Z" fill="#f4f4f4" stroke="#b4b4b4" stroke-width="0.9"/>
<rect x="83.2" y="73.4" width="4.8" height="0.8" fill="#b4b4b4"/>
<rect x="83.2" y="75.3" width="4.8" height="0.8" fill="#b4b4b4"/>
<rect x="83.2" y="77.2" width="4.8" height="0.8" fill="#b4b4b4"/>
<rect x="76" y="66.8" width="4.4" height="0.7" fill="#cfcfcf"/>
<rect x="76" y="68.6" width="4.4" height="0.7" fill="#cfcfcf"/>
<rect x="76" y="70.4" width="4.4" height="0.7" fill="#cfcfcf"/>
<rect x="74.5" y="93.6" width="11.5" height="12.4" fill="#ececec" stroke="#c8c8c8" stroke-width="0.8"/><path d="M77.6,93.6 L79.2,91.4 L81.4,91.4 L83,93.6 Z" fill="#dedede" stroke="#c0c0c0" stroke-width="0.7"/>
<path d="M82.8,97.6 L87.2,97.6 L89.6,100 L89.6,106.4 L82.8,106.4 Z" fill="#f6f6f6" stroke="#b4b4b4" stroke-width="0.9"/>
<rect x="84.2" y="101.4" width="4" height="0.8" fill="#b4b4b4"/>
<rect x="84.2" y="103.4" width="4" height="0.8" fill="#b4b4b4"/>
<polygon points="128.7,96.9 135.9,96.9 132.3,100.7" fill="#b4b7b9"/>
<path d="M75.6,119 L87.6,131.4 M87.6,119 L75.6,131.4" stroke="#a8a8a8" stroke-width="1.9"/>
<polygon points="133.4,122.9 140.6,122.9 137.0,126.7" fill="#b4b7b9"/>
<polygon points="156.2,72 158,70.2 163.4,70.2 161.6,72" fill="#e6f7fd" stroke="#6cc0e2" stroke-width="0.4"/><rect x="156.2" y="72" width="5.4" height="4.4" fill="#bfe8f7" stroke="#6cc0e2" stroke-width="0.5"/>
<circle cx="167.4" cy="68.4" r="4.3" fill="url(#gSphL)"/>
<path d="M166.4,67.6 L161.6,77 Q161.4,79.4 166,79.4 Q170.8,79.4 170.6,77 Z" fill="url(#gCone)" stroke="#b58b3e" stroke-width="0.4"/>
<polygon points="158,93.2 160.4,91.4 166.4,91.4 166.4,93.2" fill="#ececec" stroke="#bdbdbd" stroke-width="0.5"/><rect x="158" y="93.2" width="6.2" height="8" fill="#f1f1f1" stroke="#c4c4c4" stroke-width="0.5"/><rect x="156.4" y="93.6" width="1.5" height="8.6" fill="#255d7d"/>
<path d="M159.2,95 L162.6,98.4 M162.8,95.8 L162.8,98.6 L160,98.6" fill="none" stroke="#333" stroke-width="1"/>
<polygon points="164.4,97.2 166.4,95.4 172,95.4 172,97.2" fill="#e6f7fd"/><rect x="165.4" y="97.2" width="6.6" height="9.4" fill="#b6e6f8"/><rect x="164" y="98.4" width="1.6" height="8.4" fill="#0c4f72"/>
<path d="M156.4,118.4 L158.6,117 L165,117 L165,130.6 L156.4,131 Z" fill="#fbe6bd" stroke="#d9b064" stroke-width="0.7"/>
<rect x="160.6" y="118.8" width="8.2" height="8.6" fill="#aee0f5" stroke="#2a8fc0" stroke-width="0.7"/><polygon points="168.8,118.8 170.6,117.2 170.6,125.8 168.8,127.4" fill="#2a8fc0"/>
<path d="M162.2,120.4 L166,124.2 M166.2,121.2 L166.2,124.4 L163,124.4" fill="none" stroke="#333" stroke-width="1.1"/>
<polygon points="165.4,127.4 167.4,125.8 172,125.8 172,127.4" fill="#e6f7fd"/><rect x="165.4" y="127.4" width="6.6" height="5.2" fill="#b6e6f8"/>
<polygon points="310.4,67 312.6,64.6 317.8,64.6 315.6,67" fill="#e2f5fc" stroke="#2a8fc0" stroke-width="0.5"/><polygon points="315.6,67 317.8,64.6 317.8,71 315.6,73.2" fill="#5aa9c9" stroke="#2a8fc0" stroke-width="0.5"/><rect x="310.4" y="67" width="5.2" height="6.2" fill="#f3fbfe" stroke="#2a8fc0" stroke-width="0.6"/>
<circle cx="307.3" cy="74.4" r="5.3" fill="url(#gSph)"/>
<polygon points="309.6,94.8 312,92.2 317.6,92.2 315.4,94.8" fill="#dff4fb" stroke="#2a8fc0" stroke-width="0.5"/><polygon points="315.4,94.8 317.6,92.2 317.6,97.6 315.4,100" fill="#5aa9c9" stroke="#2a8fc0" stroke-width="0.5"/><rect x="309.6" y="94.8" width="5.8" height="5.2" fill="#f3fbfe" stroke="#2a8fc0" stroke-width="0.6"/>
<path d="M302.4,98.4 L306,94.8 L309,94.8 L309,100.6 L314,100.6 L316.2,101.2 L312.4,106.4 L302.4,106.4 Z" fill="#e7f6fc" stroke="#1f7fae" stroke-width="0.9"/>
<path d="M306,95.4 L306,101.6 L304,103.6 M306,101.6 L314.4,101.6" fill="none" stroke="#1f7fae" stroke-width="0.7"/><polygon points="306.4,96 308.6,96 308.6,101 306.4,101" fill="#6fa4bc"/><polygon points="306.6,102 313,102 311.6,103.8 305,103.8" fill="#e2d6d2"/>
<polygon points="303.4,120.4 306,118 316.8,118 314.2,120.4" fill="#dff4fb" stroke="#2a8fc0" stroke-width="0.5"/><polygon points="314.2,120.4 316.8,118 316.8,129 314.2,131.6" fill="#5aa9c9" stroke="#2a8fc0" stroke-width="0.5"/><rect x="303.4" y="120.4" width="10.8" height="11.2" fill="#fdfefe" stroke="#2a8fc0" stroke-width="0.8"/>
<g stroke="#f08a18" stroke-width="1"><path d="M305.4,117.2 L305.4,123.4 M302.3,120.3 L308.5,120.3 M303.2,118.1 L307.6,122.5 M307.6,118.1 L303.2,122.5"/></g><circle cx="305.4" cy="120.3" r="1.3" fill="#ffe9b0" stroke="#f08a18" stroke-width="0.6"/>
<polygon points="442,89.2 449.8,69.9 471,69.9 463.2,89.2" fill="none" stroke="#8c6a26" stroke-width="1.5"/>
<path d="M485.2,79.8 L492.4,64.4" stroke="#8c6a26" stroke-width="1.2" stroke-dasharray="3.6 2.2"/>
<path d="M483.5,92.4 L487.5,96.4 M487.5,92.4 L483.5,96.4" stroke="#8c6a26" stroke-width="1.1"/>
<path d="M491.4,94.4 L495.4,98.4 M495.4,94.4 L491.4,98.4" stroke="#8c6a26" stroke-width="1.1"/>
<path d="M481.6,100.5 L485.6,104.5 M485.6,100.5 L481.6,104.5" stroke="#8c6a26" stroke-width="1.1"/>
<polygon points="535.7,96.9 542.9,96.9 539.3,100.7" fill="#55595c"/>
<path d="M486.7,127.4 L486.7,117.60000000000001 M486.7,127.4 L496.9,127.4 M486.7,127.4 L481.5,132.6" fill="none" stroke="#8c6a26" stroke-width="1.0"/>
<polygon points="485.09999999999997,119.80000000000001 486.7,116.80000000000001 488.3,119.80000000000001" fill="#8c6a26"/>
<polygon points="494.7,125.80000000000001 497.7,127.4 494.7,129.0" fill="#8c6a26"/>
<polygon points="480.9,130.0 480.9,133.2 484.1,133.2" fill="#8c6a26"/>
<rect x="612.8" y="66.8" width="1.2" height="1.2" fill="#6d7275"/>
<rect x="612.8" y="74.8" width="1.2" height="1.2" fill="#6d7275"/>
<rect x="612.8" y="82.7" width="1.2" height="1.2" fill="#6d7275"/>
<rect x="612.8" y="90.7" width="1.2" height="1.2" fill="#6d7275"/>
<rect x="620.8" y="66.8" width="1.2" height="1.2" fill="#6d7275"/>
<rect x="620.8" y="74.8" width="1.2" height="1.2" fill="#6d7275"/>
<rect x="620.8" y="82.7" width="1.2" height="1.2" fill="#6d7275"/>
<rect x="620.8" y="90.7" width="1.2" height="1.2" fill="#6d7275"/>
<rect x="628.8" y="66.8" width="1.2" height="1.2" fill="#6d7275"/>
<rect x="628.8" y="74.8" width="1.2" height="1.2" fill="#6d7275"/>
<rect x="628.8" y="82.7" width="1.2" height="1.2" fill="#6d7275"/>
<rect x="628.8" y="90.7" width="1.2" height="1.2" fill="#6d7275"/>
<rect x="636.8" y="66.8" width="1.2" height="1.2" fill="#6d7275"/>
<rect x="636.8" y="74.8" width="1.2" height="1.2" fill="#6d7275"/>
<rect x="636.8" y="82.7" width="1.2" height="1.2" fill="#6d7275"/>
<rect x="636.8" y="90.7" width="1.2" height="1.2" fill="#6d7275"/>
<path d="M613.6,76.8 C615.5,68.5 622,68.5 624.4,76 C626.6,82.8 628.6,88.2 632,88.2 C635,88.2 637.4,85.6 638.4,82.4" fill="none" stroke="#35a8dc" stroke-width="1.7" stroke-linecap="round"/>
<polygon points="664.5,77.2 676.7,66 693.6,66 681.4,77.2" fill="url(#gExTop)" stroke="#9ad2ea" stroke-width="0.6"/>
<polygon points="681.4,77.2 693.6,66 693.6,82.8 681.4,94.1" fill="url(#gExSide)" stroke="#9ad2ea" stroke-width="0.6"/>
<rect x="664.5" y="77.2" width="16.9" height="16.9" fill="#f0f0f1" stroke="#b4b7ba" stroke-width="0.9"/>
<path d="M710,70.6 Q714.5,67.6 719.4,70.4 L719.4,72.6 L710,72.6 Z" fill="#bfe6f5"/>
<circle cx="710" cy="73" r="2.4" fill="#ffffff" stroke="#9aa0a4" stroke-width="0.9"/><circle cx="719.4" cy="73" r="2.5" fill="#bfe6f5" stroke="#1f8fc8" stroke-width="1.1"/>
<path d="M714.5,64.4 L714.5,80" stroke="#555" stroke-width="0.8" stroke-dasharray="2.4 1 0.8 1"/>
<path d="M707.4,98.4 L713,94.6 L722.6,96.6 L722.6,100.6 L715.4,103.8 L707.4,102.2 Z" fill="#c4e7f5" stroke="#8fc4da" stroke-width="0.5"/>
<path d="M707.4,98.4 L713,94.6 L718.4,95.6 L712.6,99.4 Z" fill="#d8d8d8" stroke="#8a8f92" stroke-width="0.8"/><path d="M707.4,98.4 L712.6,99.4 L712.6,103.2 L707.4,102.2 Z" fill="#e4e4e4" stroke="#8a8f92" stroke-width="0.8"/><rect x="711.6" y="100.2" width="3" height="3.2" fill="none" stroke="#1f8fc8" stroke-width="0.9"/>
<polygon points="768.1,96.9 775.3,96.9 771.7,100.7" fill="#55595c"/>
<path d="M708.6,126.6 Q711.4,118.4 722.2,117.4 L722.2,122.4 Q714.6,124.6 712.4,131.4 Z" fill="#aedcf0" stroke="#5aa9c9" stroke-width="0.6"/><path d="M708,127.4 Q710.4,118 719.4,117.2" fill="none" stroke="#8a8f92" stroke-width="0.7"/>
<circle cx="710.4" cy="129.4" r="2.7" fill="#f4f4f4" stroke="#9aa0a4" stroke-width="0.7"/><circle cx="710.4" cy="129.4" r="0.6" fill="#555"/><path d="M717,117.4 L722.2,117.4 L722.2,122.4" fill="none" stroke="#444" stroke-width="0.7" stroke-dasharray="1.4 0.9"/>
<polygon points="807.3,69.9 810.8,65.6 822.8,65.6 819.6,69.5" fill="#f6f6f6" stroke="#cfcfcf" stroke-width="0.5"/>
<polygon points="819.6,69.5 822.8,65.6 822.8,76.2 819.6,79.7" fill="#d5dfe5" stroke="#c6cbce" stroke-width="0.5"/>
<rect x="807.3" y="69.7" width="12.3" height="10" fill="#ededed" stroke="#c9c9c9" stroke-width="0.6"/>
<path d="M810.5,68.6 Q810.5,66.8 814.7,66.8 Q818.9,66.8 818.9,68.6 Q818.9,70.2 816.9,70.7 L816.9,78.0 L817.9,80.0 M810.5,68.6 Q810.5,70.2 812.5,70.7 L812.5,78.0 L811.5,80.0" fill="none" stroke="#1f8fc8" stroke-width="1.15"/>
<path d="M810.5,68.6 Q810.5,66.8 814.7,66.8 Q818.9,66.8 818.9,68.6 Q818.9,70.2 816.9,70.7 L816.9,78.0 L812.5,78.0 L812.5,70.7 Q810.5,70.2 810.5,68.6 Z" fill="#c4e9f8" fill-opacity="0.85"/>
<path d="M810.5,68.6 Q810.5,66.8 814.7,66.8 Q818.9,66.8 818.9,68.6 Q818.9,70.2 816.9,70.7 L816.9,78.0 L817.9,80.0 M810.5,68.6 Q810.5,70.2 812.5,70.7 L812.5,78.0 L811.5,80.0 M812.5,78.0 L816.9,78.0 M812.0,69.4 Q814.7,70.6 817.4,69.4" fill="none" stroke="#1f8fc8" stroke-width="1.1"/>
<path d="M807.3,95.6 L811.5,95.2 Q817.4,96.2 818.2,102.6 L818.2,106.8 L807.3,106.8 Z" fill="#ebebeb"/>
<polygon points="818.2,102.6 822.8,98.4 822.8,102.3 818.2,106.8" fill="#cddbe3"/>
<path d="M811.5,95.2 Q817.4,96.2 818.2,102.6 L822.8,98.4 Q821.8,92.2 815.0,91.3 Z" fill="url(#gLB)" stroke="#3aa8dc" stroke-width="0.9" stroke-linejoin="round"/>
<polygon points="807.3,121.6 811.9,121.3 818.2,128.0 818.2,132.9 807.3,132.6" fill="#ebebeb"/>
<polygon points="818.2,128.0 822.8,123.7 822.8,129.4 818.2,132.9" fill="#cddbe3"/>
<polygon points="811.9,121.3 816.4,117.4 822.8,123.7 818.2,128.0" fill="url(#gLB)" stroke="#3aa8dc" stroke-width="0.9" stroke-linejoin="round"/>
<polygon points="868.8,96.9 876.0,96.9 872.4,100.7" fill="#55595c"/>
<polygon points="879.8,122.9 887.0,122.9 883.4,126.7" fill="#55595c"/>
<polygon points="947.8,70.1 955.0,70.1 951.4,73.9" fill="#55595c"/>
<polygon points="938.9,122.9 946.1,122.9 942.5,126.7" fill="#55595c"/>
<polygon points="895.2,68.2 897.4,65.4 904.6,65.4 902,68.2" fill="#eef4f7" stroke="#c8d0d4" stroke-width="0.4"/><rect x="895.2" y="68.2" width="6.8" height="8" fill="#d3e6ee"/><polygon points="895.2,76.2 902,76.2 910.8,75 905.4,78.6 895.2,78.6" fill="#8fd0ea" stroke="#2a8fc0" stroke-width="0.5"/>
<polygon points="902,68.2 904.6,65.4 910.8,75 905.2,77.6" fill="url(#gLB)" stroke="#2a8fc0" stroke-width="0.8"/><path d="M903.4,66.8 L908.4,76.2" stroke="#2a8fc0" stroke-width="0.6"/>
<polygon points="895.4,95 898,92.4 909.6,92.4 907.4,95" fill="#f4f4f4" stroke="#c4c8cb" stroke-width="0.5"/><polygon points="907.4,95 909.6,92.4 909.6,103.6 907.4,106.4" fill="#d2dee4" stroke="#c4c8cb" stroke-width="0.5"/><rect x="895.4" y="95" width="12" height="11.4" fill="#eeeeee" stroke="#c0c4c7" stroke-width="0.6"/>
<rect x="897.6" y="97" width="7.6" height="7.6" fill="#b5e2f4" stroke="#2a8fc0" stroke-width="0.8"/><rect x="899.4" y="97.4" width="5.4" height="4.6" fill="#4d9fc4"/>
<polygon points="895.6,123.4 901,117.4 901,126.2 895.6,132" fill="#d5dde2" stroke="#a8b0b5" stroke-width="0.5"/><polygon points="905.4,123 910.8,117.4 910.8,126.4 905.4,132" fill="none" stroke="#8a9297" stroke-width="0.6"/>
<polygon points="898.2,124.8 901,121.8 908.4,121.8 905.6,124.8" fill="#dff4fb" stroke="#2a8fc0" stroke-width="0.6"/><rect x="898.2" y="124.8" width="7.4" height="6.2" fill="#aee0f5" stroke="#2a8fc0" stroke-width="0.8"/><polygon points="905.6,124.8 908.4,121.8 908.4,128 905.6,131" fill="#5aa9c9"/>
<path d="M895.6,132.6 L905.4,132.6 M905.6,123 L905.6,132" stroke="#6a7075" stroke-width="0.6" stroke-dasharray="0.8 0.8"/>
<polygon points="100.6,150.3 108.0,150.3 104.3,154.1" fill="#55595c"/>
<polygon points="242.6,150.3 250.0,150.3 246.3,154.1" fill="#55595c"/>
<polygon points="375.6,150.3 383.0,150.3 379.3,154.1" fill="#55595c"/>
<polygon points="558.6,150.3 566.0,150.3 562.3,154.1" fill="#55595c"/>
<polygon points="743.0,150.3 750.4,150.3 746.7,154.1" fill="#55595c"/>
<polygon points="910.6,150.3 918.0,150.3 914.3,154.1" fill="#55595c"/>
<polygon points="1159.6,150.3 1167.0,150.3 1163.3,154.1" fill="#55595c"/>
<polygon points="1412.8,150.3 1420.2,150.3 1416.5,154.1" fill="#55595c"/>
<polygon points="1539.8,150.3 1547.2,150.3 1543.5,154.1" fill="#55595c"/>
<polygon points="974.1,68.8 978.3,65 1004,65 999.8,68.8" fill="#e6e6e6" stroke="#cfcfcf" stroke-width="0.5"/>
<polygon points="999.8,68.8 1004,65 1004,90.8 999.8,94.6" fill="#c9c9c9" stroke="#c2c2c2" stroke-width="0.5"/>
<rect x="974.1" y="68.8" width="25.7" height="25.8" fill="#eeeeee" stroke="#d2d2d2" stroke-width="0.6"/>
<rect x="977.9" y="73.2" width="3.6" height="3.4" fill="#d7d7d7"/><rect x="977.9" y="73.2" width="3.6" height="1.1" fill="#bdbdbd"/><rect x="977.9" y="73.2" width="1" height="3.4" fill="#c6c6c6"/>
<rect x="977.9" y="80.2" width="3.6" height="3.4" fill="#d7d7d7"/><rect x="977.9" y="80.2" width="3.6" height="1.1" fill="#bdbdbd"/><rect x="977.9" y="80.2" width="1" height="3.4" fill="#c6c6c6"/>
<rect x="977.9" y="87.0" width="3.6" height="3.4" fill="#d7d7d7"/><rect x="977.9" y="87.0" width="3.6" height="1.1" fill="#bdbdbd"/><rect x="977.9" y="87.0" width="1" height="3.4" fill="#c6c6c6"/>
<rect x="985.2" y="73.2" width="3.6" height="3.4" fill="#d7d7d7"/><rect x="985.2" y="73.2" width="3.6" height="1.1" fill="#bdbdbd"/><rect x="985.2" y="73.2" width="1" height="3.4" fill="#c6c6c6"/>
<rect x="985.2" y="80.2" width="3.6" height="3.4" fill="#d7d7d7"/><rect x="985.2" y="80.2" width="3.6" height="1.1" fill="#bdbdbd"/><rect x="985.2" y="80.2" width="1" height="3.4" fill="#c6c6c6"/>
<rect x="985.2" y="87.0" width="3.6" height="3.4" fill="#d7d7d7"/><rect x="985.2" y="87.0" width="3.6" height="1.1" fill="#bdbdbd"/><rect x="985.2" y="87.0" width="1" height="3.4" fill="#c6c6c6"/>
<rect x="992.1" y="73.2" width="3.6" height="3.4" fill="#d7d7d7"/><rect x="992.1" y="73.2" width="3.6" height="1.1" fill="#bdbdbd"/><rect x="992.1" y="73.2" width="1" height="3.4" fill="#c6c6c6"/>
<rect x="992.1" y="80.2" width="3.6" height="3.4" fill="#d7d7d7"/><rect x="992.1" y="80.2" width="3.6" height="1.1" fill="#bdbdbd"/><rect x="992.1" y="80.2" width="1" height="3.4" fill="#c6c6c6"/>
<rect x="992.1" y="87.0" width="3.6" height="3.4" fill="#d7d7d7"/><rect x="992.1" y="87.0" width="3.6" height="1.1" fill="#bdbdbd"/><rect x="992.1" y="87.0" width="1" height="3.4" fill="#c6c6c6"/>
<polygon points="984.6,125.1 992.0,125.1 988.3,128.9" fill="#55595c"/>
<path d="M1017.4,65.6 Q1022.4,68 1022.4,78.6 L1017.4,78.6 Z M1031.6,65.6 Q1026.6,68 1026.6,78.6 L1031.6,78.6 Z" fill="#f0f0f0" stroke="#c6c6c6" stroke-width="0.8"/><path d="M1024.5,64.4 L1024.5,80" stroke="#c0c0c0" stroke-width="0.8"/>
<rect x="1021.6" y="91.6" width="10" height="10" fill="#ddd3f6" stroke="#6a2fa0" stroke-width="1.1"/>
<circle cx="1021.9" cy="101.2" r="5.2" fill="#f2f2f2" fill-opacity="0.75" stroke="#b4b4b4" stroke-width="0.9"/>
<path d="M1021.6,95.8 Q1026.6,96.6 1027.4,101.6" fill="none" stroke="#7a3fb0" stroke-width="1.3"/>
<rect x="1021.6" y="117.8" width="10" height="10" fill="#eeeeee" stroke="#c4c4c4" stroke-width="0.9"/><circle cx="1021.9" cy="127" r="5.2" fill="#ececec" fill-opacity="0.8" stroke="#bcbcbc" stroke-width="0.9"/>
<rect x="1078.2" y="65.8" width="6" height="12.6" fill="#e6e6e6"/><rect x="1084.2" y="65.8" width="9.2" height="12.6" fill="#f6f6f6" stroke="#c6c6c6" stroke-width="0.8"/><path d="M1086.2,72.2 L1091,72.2 M1089.2,70.2 L1091.2,72.2 L1089.2,74.2" fill="none" stroke="#b8b8b8" stroke-width="1.1"/>
<rect x="1078.2" y="91.4" width="15.4" height="4.4" fill="url(#gPurp)"/><rect x="1089.2" y="91.4" width="4.4" height="15.2" fill="url(#gPurpR)"/>
<path d="M1078.2,91.5 L1091.4,91.5 Q1093.5,91.5 1093.5,93.6 L1093.5,106.6" fill="none" stroke="#7a3fb0" stroke-width="1"/>
<path d="M1078.6,98.6 L1086.4,98.6 L1086.4,106.6" fill="none" stroke="#444" stroke-width="0.8" stroke-dasharray="1.2 1"/><path d="M1086.6,98.4 L1091,94 M1088.2,93.8 L1091.2,93.8 L1091.2,96.8" fill="none" stroke="#222" stroke-width="0.9"/>
<rect x="1083.4" y="117.8" width="10" height="10" fill="#fbfbfb" stroke="#c8c8c8" stroke-width="0.9"/><circle cx="1083.7" cy="127" r="5.2" fill="none" stroke="#c0c0c0" stroke-width="0.9"/><path d="M1083.6,121.8 Q1088.4,122.6 1089.2,127.6" fill="none" stroke="#5a2590" stroke-width="1.4"/>
<path d="M1154,69.6 Q1156.4,72.6 1158.8,68.4 Q1161,64.6 1164.4,67.4" fill="none" stroke="#9aa0a4" stroke-width="0.9"/>
<path d="M1151.2,79.4 L1153.6,75.6 L1166.2,74.6 L1164,79.4 Z" fill="#f4f4f4" stroke="#8a9095" stroke-width="0.9"/>
<path d="M1151.6,76.8 Q1154.6,78.6 1157.2,74.2 Q1159.4,70.6 1163.2,75" fill="none" stroke="#7a3fb0" stroke-width="1.3"/>
<path d="M1152.4,92.4 L1165.6,92.4 L1165.6,95.2 L1155.2,95.2 L1155.2,102.8 L1165.6,102.8 L1165.6,105.6 L1152.4,105.6 Z" fill="#f6f6f6" stroke="#c4c4c4" stroke-width="0.9"/>
<path d="M1151.8,122.8 Q1153.4,119.6 1156.2,120.6 Q1160.6,126.6 1165.6,119.6 L1165.6,131.6 L1153,131.6 L1153,124" fill="#ffffff" stroke="#6a2fa0" stroke-width="1"/>
<path d="M1156.2,120.6 Q1160.6,126.6 1165.6,119.6 L1157,119.8 Z" fill="#d9cdf3"/><path d="M1151.6,123.4 Q1153.4,119.4 1156.2,120.6 Q1160.6,126.6 1165.6,119.6 L1166.6,117.4" fill="none" stroke="#6a2fa0" stroke-width="1.5"/>
<rect x="1220.3" y="64.6" width="15.4" height="15" fill="#eeeeee" stroke="#cccccc" stroke-width="0.8"/><polygon points="1227.4,64.6 1235.7,64.6 1235.7,72.8" fill="#ddd3f6" stroke="#6a2fa0" stroke-width="1"/>
<path d="M1220.4,93.4 Q1223.4,91.4 1226.2,91.4 L1226.2,103.8 Q1223.4,103.8 1220.4,105.4 Z" fill="#c9edf9" stroke="#a8b0b5" stroke-width="0.8"/>
<path d="M1228.2,91.4 Q1232,91.6 1235.8,94.4 L1235.8,106.6 Q1232,104.2 1228.2,103.8 Z" fill="url(#xhatch)" stroke="#17648e" stroke-width="1"/>
<polygon points="1269.4,96.9 1276.6,96.9 1273.0,100.7" fill="#55595c"/>
<path d="M1220.6,118.6 Q1224.6,116.6 1229.2,117.6 L1230.2,121.8 Q1233,121 1235.6,122.2 L1235.6,132.2 Q1230.2,129.6 1225,131.6 L1224.6,124.8 Q1222.6,124.2 1221,125 Z" fill="#c9edf9" stroke="#17648e" stroke-width="1.1"/>
<path d="M1339.4,89 Q1339.6,75 1349,67.4 Q1361,62.6 1371,71.6 Q1366.8,82 1363,94.6 Q1352,84.6 1339.4,89 Z" fill="url(#gLB)" stroke="#a4a9ad" stroke-width="0.9"/>
<path d="M1362.6,66.2 Q1352.6,74 1350.4,86.6 M1371,71.6 Q1366.8,82 1363,94.6" fill="none" stroke="#2a8fc0" stroke-width="1.1"/><path d="M1342,76.6 Q1355,71 1368.4,79" fill="none" stroke="#a4a9ad" stroke-width="0.8"/>
<rect x="1391.6" y="65.8" width="12" height="11.6" fill="url(#hatch)" stroke="#2a8fc0" stroke-width="0.9"/>
<path d="M1389.6,94.4 Q1397,88.6 1404.6,94.4 L1404.6,105.6 Q1397,99.6 1389.6,105.6 Z" fill="url(#gLB)" stroke="#a4a9ad" stroke-width="0.9"/>
<path d="M1389.6,121.4 L1393.4,117.6 L1404.8,117.6 L1404.8,128.8 L1401,132.6 L1389.6,132.6 Z M1389.6,121.4 L1401,121.4 L1401,132.6 M1401,121.4 L1404.8,117.6" fill="none" stroke="#555" stroke-width="0.6"/><circle cx="1397" cy="125" r="4.6" fill="url(#gSph)"/>
<rect x="1491.5" y="65.5" width="30.2" height="29" fill="#fbe9c9" stroke="#d8ad62" stroke-width="0.9"/>
<path d="M1499.6,65.5 L1521.5,65.5 L1521.5,87.4 L1517,87.4 L1517,84.8 Q1519.4,83.4 1518.6,81 Q1517,78.6 1512.4,78.8 Q1507.6,79 1506.6,81.4 Q1506,83.6 1508.6,84.8 L1508.6,87.4 L1499.6,87.4 L1499.6,80.8 Q1502,82.2 1504.4,81.2 Q1507,79.2 1506.8,75.6 Q1506.4,71.6 1503.8,70.6 Q1501.4,70 1499.6,72 Z" fill="#c9eef9" stroke="#2a8fc0" stroke-width="0.9"/>
<polygon points="1581.6,41.2 1587.4,36 1593.2,41.2 1591.5,42.8 1587.4,39.2 1583.3,42.8" fill="#ffffff"/>
<g transform="translate(1821.8,41.8) scale(1.2)"><g stroke="#4a4f52" stroke-width="2.4"><line x1="0" y1="-6.6" x2="0" y2="-4.4" transform="rotate(0)"/><line x1="0" y1="-6.6" x2="0" y2="-4.4" transform="rotate(45)"/><line x1="0" y1="-6.6" x2="0" y2="-4.4" transform="rotate(90)"/><line x1="0" y1="-6.6" x2="0" y2="-4.4" transform="rotate(135)"/><line x1="0" y1="-6.6" x2="0" y2="-4.4" transform="rotate(180)"/><line x1="0" y1="-6.6" x2="0" y2="-4.4" transform="rotate(225)"/><line x1="0" y1="-6.6" x2="0" y2="-4.4" transform="rotate(270)"/><line x1="0" y1="-6.6" x2="0" y2="-4.4" transform="rotate(315)"/></g><circle r="4.9" fill="#ffffff" stroke="#4a4f52" stroke-width="1"/><circle r="2.1" fill="none" stroke="#4a4f52" stroke-width="1"/></g>
<circle cx="1846" cy="42" r="7.8" fill="#2f3639"/><circle cx="1847.4" cy="40.6" r="2.9" fill="none" stroke="#ffffff" stroke-width="1.6"/><path d="M1845.2,43 L1841.8,46.4" stroke="#ffffff" stroke-width="2"/>
<polygon points="1863.6,40.6 1870.2,37.6 1876.8,40.6 1870.2,43.6" fill="#ffffff"/><path d="M1866.2,43 L1866.2,46 Q1870.2,48.4 1874.2,46 L1874.2,43 L1870.2,44.9 Z" fill="#ffffff"/><path d="M1864.4,41 L1864.4,45.6" stroke="#fff" stroke-width="0.9"/>
<polygon points="1884.3,39.8 1892.3,39.8 1888.3,44.2" fill="#ffffff"/>
<text x="1903.6" y="47" font-family="Liberation Sans, sans-serif" font-size="14.5" font-weight="bold" fill="#ffffff">?</text>
<rect x="12.4" y="170.3" width="3.2" height="3.2" fill="#ffffff" stroke="#2e3336" stroke-width="0.9"/>
<rect x="12.4" y="176.5" width="3.2" height="3.2" fill="#ffffff" stroke="#2e3336" stroke-width="0.9"/>
<rect x="12.4" y="182.6" width="3.2" height="3.2" fill="#ffffff" stroke="#2e3336" stroke-width="0.9"/>
<rect x="19.6" y="176.5" width="3.2" height="3.2" fill="#ffffff" stroke="#2e3336" stroke-width="0.9"/>
<path d="M14,173.6 L14,176.4 M14,179.8 L14,182.6 M15.8,178.1 L19.4,178.1" stroke="#2e3336" stroke-width="0.9"/>
<path d="M39.4,172.2 L40.4,171 L43.0,171 L43.8,172.2 L48.2,172.2 L48.2,177 L39.4,177 Z" fill="#f7dfae" stroke="#c59a50" stroke-width="0.7"/><rect x="39.9" y="173" width="7.8" height="3.5" fill="#fdf0d2"/>
<path d="M42.6,176.6 L43.6,175.4 L46.2,175.4 L47.0,176.6 L51.400000000000006,176.6 L51.400000000000006,181.4 L42.6,181.4 Z" fill="#f7dfae" stroke="#c59a50" stroke-width="0.7"/><rect x="43.1" y="177.4" width="7.8" height="3.5" fill="#fdf0d2"/>
<path d="M45.8,181.0 L46.8,179.8 L49.4,179.8 L50.199999999999996,181.0 L54.599999999999994,181.0 L54.599999999999994,185.8 L45.8,185.8 Z" fill="#f7dfae" stroke="#c59a50" stroke-width="0.7"/><rect x="46.3" y="181.8" width="7.8" height="3.5" fill="#fdf0d2"/>
<polygon points="13.9,203.2 23,203.2 18.4,209.8" fill="#b9b9b9"/>
<polygon points="29,206.2 32.8,202.4 41.6,202.4 37.9,206.2" fill="#6a6a6a"/><polygon points="37.9,206.2 41.9,202.6 41.9,211.6 37.9,214.8" fill="#8a8a8a"/><rect x="29" y="206.2" width="8.9" height="8.6" fill="#55b03a"/>
<rect x="49" y="200.4" width="2" height="1.5" fill="#b4b4b4"/>
<rect x="49" y="204.4" width="2" height="1.5" fill="#b4b4b4"/>
<rect x="49" y="208.4" width="2" height="1.5" fill="#b4b4b4"/>
<rect x="49" y="212.5" width="2" height="1.5" fill="#b4b4b4"/>
<rect x="71.2" y="200.3" width="6.6" height="3.2" fill="#9fdcf5" stroke="#1c6f9c" stroke-width="1"/>
<rect x="73.3" y="205.4" width="6.6" height="3.2" fill="#9fdcf5" stroke="#1c6f9c" stroke-width="1"/>
<rect x="75.2" y="210.5" width="6.6" height="3.2" fill="#9fdcf5" stroke="#1c6f9c" stroke-width="1"/>
<polygon points="65.9,200.8 69.1,200.8 67.5,203.0" fill="#111"/>
<polygon points="67.80000000000001,206 71.0,206 69.4,208.2" fill="#111"/>
<polygon points="69.9,211 73.1,211 71.5,213.2" fill="#111"/>
<rect x="97.4" y="199.39999999999998" width="3.6" height="3.6" fill="#8a8a8a" stroke="#555" stroke-width="0.7"/><polygon points="93,199.5 95.2,201.2 93,202.89999999999998" fill="#111"/>
<rect x="97.4" y="205.39999999999998" width="3.6" height="3.6" fill="#8a8a8a" stroke="#555" stroke-width="0.7"/><polygon points="93,205.5 95.2,207.2 93,208.89999999999998" fill="#111"/>
<rect x="97.4" y="211.39999999999998" width="3.6" height="3.6" fill="#8a8a8a" stroke="#555" stroke-width="0.7"/><polygon points="93,211.5 95.2,213.2 93,214.89999999999998" fill="#111"/>
<rect x="115.4" y="200.8" width="12.6" height="12.8" fill="#e4e4e4" stroke="#a2a2a2" stroke-width="0.9"/><path d="M119.6,200.8 L119.6,213.6 M123.8,200.8 L123.8,213.6 M115.4,203.4 L128,203.4" stroke="#a2a2a2" stroke-width="0.9"/><rect x="115.9" y="201.3" width="11.6" height="1.7" fill="#f4f4f4"/>
<path d="M121.3,212.6 Q125.6,207.4 129.9,212.6 Q125.6,217.8 121.3,212.6 Z" fill="#8c8c8c"/><circle cx="125.6" cy="212.6" r="1.87" fill="#ffffff"/><circle cx="125.6" cy="212.6" r="0.83" fill="#8c8c8c"/>
<path d="M149.4,201.2 L154.4,199.4 L156.6,199.4 L156.6,214.6 L149.4,212 Z" fill="#f9e3b6" stroke="#c9a35e" stroke-width="0.7"/><path d="M156.6,199.4 L158.8,199.4 L158.8,206 Q160.8,207 160.6,211.4 L156.6,214.6 Z" fill="#e6c27e" stroke="#c9a35e" stroke-width="0.6"/>
<g stroke="#f08a18" stroke-width="1"><path d="M150.6,199 L150.6,205 M147.6,202 L153.6,202 M148.5,199.9 L152.7,204.1 M152.7,199.9 L148.5,204.1"/></g><circle cx="150.6" cy="202" r="1.2" fill="#ffe9b0" stroke="#f08a18" stroke-width="0.5"/>
<path d="M182.9,203 L182.9,205.2 M182.9,209 L182.9,211" stroke="#333" stroke-width="0.9"/>
<rect x="181.1" y="199.3" width="3.6" height="3.6" fill="#fff" stroke="#333" stroke-width="0.9"/><rect x="181.1" y="205.3" width="3.6" height="3.6" fill="#7fcdf0" stroke="#1c6f9c" stroke-width="0.9"/><rect x="181.1" y="211.1" width="3.6" height="3.6" fill="#fff" stroke="#333" stroke-width="0.9"/>
<path d="M186.8,207.2 L196.2,207.2 L192.4,210.8 L192.4,214.6 L190.6,214.6 L190.6,210.8 Z" fill="#444"/>
<rect x="205.2" y="200.6" width="3.9" height="13" fill="#9fdcf5" stroke="#1c6f9c" stroke-width="1"/><path d="M210,200.8 L217.6,200.8 L217.6,204 L210,204 Z M213.8,200.8 L213.8,204" fill="#fff" stroke="#555" stroke-width="0.9"/>
<path d="M211.6,206 L216.8,206 L219.4,208.6 L219.4,214.4 L211.6,214.4 Z" fill="#f4f4f4" stroke="#8c8c8c" stroke-width="0.9"/><path d="M213.2,210 L214,210 M215,210 L218,210 M213.2,212.2 L214,212.2 M215,212.2 L218,212.2" stroke="#666" stroke-width="0.8"/><polygon points="216.8,206 219.4,208.6 216.8,208.6" fill="#9fc8dc"/>
<path d="M237.2,204 L240,206.4 L237.2,208.8 M241.6,204 L244.4,206.4 L241.6,208.8" fill="none" stroke="#2e3336" stroke-width="1.3"/>
<path d="M256.6,199.6 L264.8,199.6 L268.6,203.4 L268.6,214.6 L256.6,214.6 Z" fill="url(#gPage)" stroke="#b4bcc4" stroke-width="0.8"/><polygon points="264.8,199.6 268.6,203.4 264.8,203.4" fill="#b9cbd9"/>
<circle cx="259.6" cy="206.4" r="1.1" fill="none" stroke="#aab2b8" stroke-width="0.6"/><rect x="261.8" y="206.0" width="4.8" height="0.8" fill="#aab2b8"/>
<circle cx="259.6" cy="210.6" r="1.1" fill="none" stroke="#aab2b8" stroke-width="0.6"/><rect x="261.8" y="210.2" width="4.8" height="0.8" fill="#aab2b8"/>
<polygon points="271.6,214.8 271.6,217.4 269.0,217.4" fill="#666"/>
<path d="M12,229.6 L28,229.6 L21.4,236.8 L21.4,243 L18.6,243 L18.6,236.8 Z" fill="#fbfbfb" stroke="#6e7478" stroke-width="1"/>
<path d="M218.4,232.6 L225.4,239.8 M225.4,232.6 L218.4,239.8" stroke="#b2b2b2" stroke-width="1.1"/>
<polygon points="237.7,234.0 245.1,234.0 241.4,238.0" fill="#55595c"/>
<path d="M262.5,230.2 L262.5,241.2 M257,235.7 L268,235.7" stroke="#8a8a8a" stroke-width="2.2"/>
<path d="M19.5,275.8 L19.5,278.4 M19.5,287 L19.5,368 M19.5,376.4 L19.5,386 M19.5,394.4 L19.5,422 M19.5,430.4 L19.5,440 M19.5,448.4 L19.5,494 M19.5,502.4 L19.5,512 M19.5,520.4 L19.5,566 M19.5,574.4 L19.5,620" stroke="#c6c9cb" stroke-width="1"/>
<polygon points="12.4,260.4 14.8,258.2 24.8,258.2 22.6,260.4" fill="#d4f0fa" stroke="#2d9fd0" stroke-width="0.5"/><polygon points="22.6,260.4 24.8,258.2 24.8,267.4 22.6,269.8" fill="#2d9fd0"/><rect x="12.4" y="260.4" width="10.2" height="9.4" fill="#aee3f5" stroke="#2d9fd0" stroke-width="0.9"/>
<polygon points="17.2,279.20000000000005 17.2,286.0 21.2,282.6" fill="#55595c"/>
<rect x="32.5" y="274.8" width="13" height="14.6" fill="#fbfcfd" stroke="#a9aeb2" stroke-width="0.8"/><rect x="32.9" y="275.2" width="12.2" height="1.1" fill="#48a7dc"/>
<rect x="34.5" y="277.3" width="2.6" height="2.6" fill="#bfe6f7" stroke="#1f8fc8" stroke-width="0.9"/><rect x="38.8" y="277.1" width="4.6" height="0.8" fill="#9a9fa3"/><rect x="38.8" y="279.1" width="3" height="0.8" fill="#b9bdc0"/>
<rect x="34.5" y="281.3" width="2.6" height="2.6" fill="#bfe6f7" stroke="#1f8fc8" stroke-width="0.9"/><rect x="38.8" y="281.1" width="4.6" height="0.8" fill="#9a9fa3"/><rect x="38.8" y="283.1" width="3" height="0.8" fill="#b9bdc0"/>
<rect x="34.5" y="285.3" width="2.6" height="2.6" fill="#bfe6f7" stroke="#1f8fc8" stroke-width="0.9"/><rect x="38.8" y="285.1" width="4.6" height="0.8" fill="#9a9fa3"/><rect x="38.8" y="287.1" width="3" height="0.8" fill="#b9bdc0"/>
<path d="M19.5,300.2 L27.6,300.2" stroke="#c6c9cb" stroke-width="1"/>
<polygon points="31.5,303.8 34.9,295.5 45.5,295.5 42.1,303.8" fill="none" stroke="#8c6a26" stroke-width="1.1"/>
<path d="M19.5,318.2 L27.6,318.2" stroke="#c6c9cb" stroke-width="1"/>
<polygon points="31.5,321.8 34.9,313.5 45.5,313.5 42.1,321.8" fill="none" stroke="#8c6a26" stroke-width="1.1"/>
<path d="M19.5,336.2 L27.6,336.2" stroke="#c6c9cb" stroke-width="1"/>
<polygon points="31.5,339.8 34.9,331.5 45.5,331.5 42.1,339.8" fill="none" stroke="#8c6a26" stroke-width="1.1"/>
<path d="M19.5,354.2 L27.6,354.2" stroke="#c6c9cb" stroke-width="1"/>
<path d="M36.3,356.4 L36.3,347.4 M36.3,356.4 L45.699999999999996,356.4 M36.3,356.4 L31.499999999999996,361.2" fill="none" stroke="#8a5a1a" stroke-width="1.0"/>
<polygon points="34.699999999999996,349.59999999999997 36.3,346.59999999999997 37.9,349.59999999999997" fill="#8a5a1a"/>
<polygon points="43.49999999999999,354.79999999999995 46.49999999999999,356.4 43.49999999999999,358.0" fill="#8a5a1a"/>
<polygon points="30.899999999999995,358.59999999999997 30.899999999999995,361.8 34.099999999999994,361.8" fill="#8a5a1a"/>
<polygon points="17.2,369.20000000000005 17.2,376.0 21.2,372.6" fill="#55595c"/>
<polygon points="31.3,370.2 37.3,364.8 46.6,364.8 40.6,370.2" fill="url(#gExTop)" stroke="#8ccbe6" stroke-width="0.5"/>
<polygon points="40.6,370.2 46.6,364.8 46.6,374.1 40.6,379.5" fill="url(#gExSide)" stroke="#8ccbe6" stroke-width="0.5"/>
<rect x="31.3" y="370.2" width="9.3" height="9.3" fill="#f1f1f2" stroke="#b3b6b9" stroke-width="0.80"/>
<polygon points="17.2,387.20000000000005 17.2,394.0 21.2,390.6" fill="#55595c"/>
<polygon points="31.3,388.2 37.3,382.8 46.6,382.8 40.6,388.2" fill="url(#gExTop)" stroke="#8ccbe6" stroke-width="0.5"/>
<polygon points="40.6,388.2 46.6,382.8 46.6,392.1 40.6,397.5" fill="url(#gExSide)" stroke="#8ccbe6" stroke-width="0.5"/>
<rect x="31.3" y="388.2" width="9.3" height="9.3" fill="#f1f1f2" stroke="#b3b6b9" stroke-width="0.80"/>
<polygon points="17.2,423.20000000000005 17.2,430.0 21.2,426.6" fill="#55595c"/>
<polygon points="31.3,424.2 37.3,418.8 46.6,418.8 40.6,424.2" fill="url(#gExTop)" stroke="#8ccbe6" stroke-width="0.5"/>
<polygon points="40.6,424.2 46.6,418.8 46.6,428.1 40.6,433.5" fill="url(#gExSide)" stroke="#8ccbe6" stroke-width="0.5"/>
<rect x="31.3" y="424.2" width="9.3" height="9.3" fill="#f1f1f2" stroke="#b3b6b9" stroke-width="0.80"/>
<polygon points="17.2,441.20000000000005 17.2,448.0 21.2,444.6" fill="#55595c"/>
<polygon points="31.3,442.2 37.3,436.8 46.6,436.8 40.6,442.2" fill="url(#gExTop)" stroke="#8ccbe6" stroke-width="0.5"/>
<polygon points="40.6,442.2 46.6,436.8 46.6,446.1 40.6,451.5" fill="url(#gExSide)" stroke="#8ccbe6" stroke-width="0.5"/>
<rect x="31.3" y="442.2" width="9.3" height="9.3" fill="#f1f1f2" stroke="#b3b6b9" stroke-width="0.80"/>
<polygon points="17.2,495.20000000000005 17.2,502.0 21.2,498.6" fill="#55595c"/>
<polygon points="31.3,496.2 37.3,490.8 46.6,490.8 40.6,496.2" fill="url(#gExTop)" stroke="#8ccbe6" stroke-width="0.5"/>
<polygon points="40.6,496.2 46.6,490.8 46.6,500.1 40.6,505.5" fill="url(#gExSide)" stroke="#8ccbe6" stroke-width="0.5"/>
<rect x="31.3" y="496.2" width="9.3" height="9.3" fill="#f1f1f2" stroke="#b3b6b9" stroke-width="0.80"/>
<polygon points="17.2,513.2 17.2,520.0 21.2,516.6" fill="#55595c"/>
<polygon points="31.3,514.2 37.3,508.8 46.6,508.8 40.6,514.2" fill="url(#gExTop)" stroke="#8ccbe6" stroke-width="0.5"/>
<polygon points="40.6,514.2 46.6,508.8 46.6,518.1 40.6,523.5" fill="url(#gExSide)" stroke="#8ccbe6" stroke-width="0.5"/>
<rect x="31.3" y="514.2" width="9.3" height="9.3" fill="#f1f1f2" stroke="#b3b6b9" stroke-width="0.80"/>
<polygon points="17.2,567.2 17.2,574.0 21.2,570.6" fill="#55595c"/>
<polygon points="31.3,568.2 37.3,562.8 46.6,562.8 40.6,568.2" fill="url(#gExTop)" stroke="#8ccbe6" stroke-width="0.5"/>
<polygon points="40.6,568.2 46.6,562.8 46.6,572.1 40.6,577.5" fill="url(#gExSide)" stroke="#8ccbe6" stroke-width="0.5"/>
<rect x="31.3" y="568.2" width="9.3" height="9.3" fill="#f1f1f2" stroke="#b3b6b9" stroke-width="0.80"/>
<polygon points="17.2,621.2 17.2,628.0 21.2,624.6" fill="#55595c"/>
<polygon points="31.3,622.2 37.3,616.8 46.6,616.8 40.6,622.2" fill="url(#gExTop)" stroke="#8ccbe6" stroke-width="0.5"/>
<polygon points="40.6,622.2 46.6,616.8 46.6,626.1 40.6,631.5" fill="url(#gExSide)" stroke="#8ccbe6" stroke-width="0.5"/>
<rect x="31.3" y="622.2" width="9.3" height="9.3" fill="#f1f1f2" stroke="#b3b6b9" stroke-width="0.80"/>
<path d="M19.5,408.2 L27.6,408.2" stroke="#c6c9cb" stroke-width="1"/>
<rect x="32.2" y="402.8" width="0.9" height="0.9" fill="#cfcfcf"/>
<rect x="36.4" y="402.8" width="0.9" height="0.9" fill="#cfcfcf"/>
<rect x="40.6" y="402.8" width="0.9" height="0.9" fill="#cfcfcf"/>
<rect x="44.8" y="402.8" width="0.9" height="0.9" fill="#cfcfcf"/>
<rect x="36.4" y="408.2" width="0.9" height="0.9" fill="#cfcfcf"/>
<rect x="40.6" y="408.2" width="0.9" height="0.9" fill="#cfcfcf"/>
<rect x="32.2" y="413.6" width="0.9" height="0.9" fill="#cfcfcf"/>
<rect x="36.4" y="413.6" width="0.9" height="0.9" fill="#cfcfcf"/>
<rect x="40.6" y="413.6" width="0.9" height="0.9" fill="#cfcfcf"/>
<rect x="44.8" y="413.6" width="0.9" height="0.9" fill="#cfcfcf"/>
<path d="M32.8,411.8 Q33.4,405.6 39,405.6 Q44.6,405.6 45.2,411.8" fill="none" stroke="#c9c4b8" stroke-width="1.5"/>
<path d="M19.5,480.2 L27.6,480.2" stroke="#c6c9cb" stroke-width="1"/>
<rect x="32.2" y="474.8" width="0.9" height="0.9" fill="#cfcfcf"/>
<rect x="36.4" y="474.8" width="0.9" height="0.9" fill="#cfcfcf"/>
<rect x="40.6" y="474.8" width="0.9" height="0.9" fill="#cfcfcf"/>
<rect x="44.8" y="474.8" width="0.9" height="0.9" fill="#cfcfcf"/>
<rect x="36.4" y="480.2" width="0.9" height="0.9" fill="#cfcfcf"/>
<rect x="40.6" y="480.2" width="0.9" height="0.9" fill="#cfcfcf"/>
<rect x="32.2" y="485.6" width="0.9" height="0.9" fill="#cfcfcf"/>
<rect x="36.4" y="485.6" width="0.9" height="0.9" fill="#cfcfcf"/>
<rect x="40.6" y="485.6" width="0.9" height="0.9" fill="#cfcfcf"/>
<rect x="44.8" y="485.6" width="0.9" height="0.9" fill="#cfcfcf"/>
<path d="M32.8,483.8 Q33.4,477.6 39,477.6 Q44.6,477.6 45.2,483.8" fill="none" stroke="#c9c4b8" stroke-width="1.5"/>
<path d="M19.5,606.2 L27.6,606.2" stroke="#c6c9cb" stroke-width="1"/>
<rect x="32.2" y="600.8" width="0.9" height="0.9" fill="#cfcfcf"/>
<rect x="36.4" y="600.8" width="0.9" height="0.9" fill="#cfcfcf"/>
<rect x="40.6" y="600.8" width="0.9" height="0.9" fill="#cfcfcf"/>
<rect x="44.8" y="600.8" width="0.9" height="0.9" fill="#cfcfcf"/>
<rect x="36.4" y="606.2" width="0.9" height="0.9" fill="#cfcfcf"/>
<rect x="40.6" y="606.2" width="0.9" height="0.9" fill="#cfcfcf"/>
<rect x="32.2" y="611.6" width="0.9" height="0.9" fill="#cfcfcf"/>
<rect x="36.4" y="611.6" width="0.9" height="0.9" fill="#cfcfcf"/>
<rect x="40.6" y="611.6" width="0.9" height="0.9" fill="#cfcfcf"/>
<rect x="44.8" y="611.6" width="0.9" height="0.9" fill="#cfcfcf"/>
<path d="M32.8,609.8000000000001 Q33.4,603.6 39,603.6 Q44.6,603.6 45.2,609.8000000000001" fill="none" stroke="#c9c4b8" stroke-width="1.5"/>
<path d="M19.5,462.2 L27.6,462.2" stroke="#c6c9cb" stroke-width="1"/>
<path d="M31.3,458.0 L35.5,457.6 Q41.4,458.6 42.2,465.0 L42.2,469.2 L31.3,469.2 Z" fill="#ebebeb"/>
<polygon points="42.2,465.0 46.8,460.8 46.8,464.7 42.2,469.2" fill="#cddbe3"/>
<path d="M35.5,457.6 Q41.4,458.6 42.2,465.0 L46.8,460.8 Q45.8,454.6 39.0,453.7 Z" fill="url(#gLB)" stroke="#3aa8dc" stroke-width="0.9" stroke-linejoin="round"/>
<path d="M19.5,534.2 L27.6,534.2" stroke="#c6c9cb" stroke-width="1"/>
<polygon points="31.3,531.3 34.8,527.0 46.8,527.0 43.6,530.9" fill="#f6f6f6" stroke="#cfcfcf" stroke-width="0.5"/>
<polygon points="43.6,530.9 46.8,527.0 46.8,537.6 43.6,541.1" fill="#d5dfe5" stroke="#c6cbce" stroke-width="0.5"/>
<rect x="31.3" y="531.1" width="12.3" height="10" fill="#ededed" stroke="#c9c9c9" stroke-width="0.6"/>
<path d="M34.5,530.0 Q34.5,528.2 38.7,528.2 Q42.9,528.2 42.9,530.0 Q42.9,531.6 40.9,532.1 L40.9,539.4 L41.9,541.4 M34.5,530.0 Q34.5,531.6 36.5,532.1 L36.5,539.4 L35.5,541.4" fill="none" stroke="#1f8fc8" stroke-width="1.15"/>
<path d="M34.5,530.0 Q34.5,528.2 38.7,528.2 Q42.9,528.2 42.9,530.0 Q42.9,531.6 40.9,532.1 L40.9,539.4 L36.5,539.4 L36.5,532.1 Q34.5,531.6 34.5,530.0 Z" fill="#c4e9f8" fill-opacity="0.85"/>
<path d="M34.5,530.0 Q34.5,528.2 38.7,528.2 Q42.9,528.2 42.9,530.0 Q42.9,531.6 40.9,532.1 L40.9,539.4 L41.9,541.4 M34.5,530.0 Q34.5,531.6 36.5,532.1 L36.5,539.4 L35.5,541.4 M36.5,539.4 L40.9,539.4 M36.0,530.8 Q38.7,532.0 41.4,530.8" fill="none" stroke="#1f8fc8" stroke-width="1.1"/>
<path d="M19.5,552.2 L27.6,552.2" stroke="#c6c9cb" stroke-width="1"/>
<polygon points="31.3,549.3 34.8,545.0 46.8,545.0 43.6,548.9" fill="#f6f6f6" stroke="#cfcfcf" stroke-width="0.5"/>
<polygon points="43.6,548.9 46.8,545.0 46.8,555.6 43.6,559.1" fill="#d5dfe5" stroke="#c6cbce" stroke-width="0.5"/>
<rect x="31.3" y="549.1" width="12.3" height="10" fill="#ededed" stroke="#c9c9c9" stroke-width="0.6"/>
<path d="M34.5,548.0 Q34.5,546.2 38.7,546.2 Q42.9,546.2 42.9,548.0 Q42.9,549.6 40.9,550.1 L40.9,557.4 L41.9,559.4 M34.5,548.0 Q34.5,549.6 36.5,550.1 L36.5,557.4 L35.5,559.4" fill="none" stroke="#1f8fc8" stroke-width="1.15"/>
<path d="M34.5,548.0 Q34.5,546.2 38.7,546.2 Q42.9,546.2 42.9,548.0 Q42.9,549.6 40.9,550.1 L40.9,557.4 L36.5,557.4 L36.5,550.1 Q34.5,549.6 34.5,548.0 Z" fill="#c4e9f8" fill-opacity="0.85"/>
<path d="M34.5,548.0 Q34.5,546.2 38.7,546.2 Q42.9,546.2 42.9,548.0 Q42.9,549.6 40.9,550.1 L40.9,557.4 L41.9,559.4 M34.5,548.0 Q34.5,549.6 36.5,550.1 L36.5,557.4 L35.5,559.4 M36.5,557.4 L40.9,557.4 M36.0,548.8 Q38.7,550.0 41.4,548.8" fill="none" stroke="#1f8fc8" stroke-width="1.1"/>
<path d="M19.5,588.2 L27.6,588.2" stroke="#c6c9cb" stroke-width="1"/>
<polygon points="31.3,585.3 34.8,581.0 46.8,581.0 43.6,584.9" fill="#f6f6f6" stroke="#cfcfcf" stroke-width="0.5"/>
<polygon points="43.6,584.9 46.8,581.0 46.8,591.6 43.6,595.1" fill="#d5dfe5" stroke="#c6cbce" stroke-width="0.5"/>
<rect x="31.3" y="585.1" width="12.3" height="10" fill="#ededed" stroke="#c9c9c9" stroke-width="0.6"/>
<path d="M34.5,584.0 Q34.5,582.2 38.7,582.2 Q42.9,582.2 42.9,584.0 Q42.9,585.6 40.9,586.1 L40.9,593.4 L41.9,595.4 M34.5,584.0 Q34.5,585.6 36.5,586.1 L36.5,593.4 L35.5,595.4" fill="none" stroke="#1f8fc8" stroke-width="1.15"/>
<path d="M34.5,584.0 Q34.5,582.2 38.7,582.2 Q42.9,582.2 42.9,584.0 Q42.9,585.6 40.9,586.1 L40.9,593.4 L36.5,593.4 L36.5,586.1 Q34.5,585.6 34.5,584.0 Z" fill="#c4e9f8" fill-opacity="0.85"/>
<path d="M34.5,584.0 Q34.5,582.2 38.7,582.2 Q42.9,582.2 42.9,584.0 Q42.9,585.6 40.9,586.1 L40.9,593.4 L41.9,595.4 M34.5,584.0 Q34.5,585.6 36.5,586.1 L36.5,593.4 L35.5,595.4 M36.5,593.4 L40.9,593.4 M36.0,584.8 Q38.7,586.0 41.4,584.8" fill="none" stroke="#1f8fc8" stroke-width="1.1"/>
<path d="M11.6,639.5 L274.6,639.5" stroke="#5fc63c" stroke-width="1.2"/><polygon points="11.2,636.6 13.6,639.5 11.2,642.4" fill="#5fc63c"/><polygon points="274.9,636.6 272.5,639.5 274.9,642.4" fill="#5fc63c"/>
<defs><linearGradient id="gRep" x1="0" y1="0" x2="1" y2="1"><stop offset="0" stop-color="#c8e8f6"/><stop offset="0.5" stop-color="#7fc3e0"/><stop offset="1" stop-color="#4a9cbf"/></linearGradient>
<linearGradient id="gStat" x1="0" y1="0" x2="0" y2="1"><stop offset="0" stop-color="#ffffff"/><stop offset="1" stop-color="#c3d9e6"/></linearGradient>
<radialGradient id="gGlobe" cx="0.4" cy="0.35" r="0.75"><stop offset="0" stop-color="#7fd0ff"/><stop offset="0.6" stop-color="#2a9be0"/><stop offset="1" stop-color="#1670b8"/></radialGradient>
<linearGradient id="gEdge" x1="0" y1="0" x2="1" y2="1"><stop offset="0" stop-color="#35c1f1"/><stop offset="0.5" stop-color="#1b8ad6"/><stop offset="1" stop-color="#0c59a4"/></linearGradient>
<linearGradient id="gEdge2" x1="0" y1="1" x2="1" y2="0"><stop offset="0" stop-color="#2ab3e8"/><stop offset="0.6" stop-color="#4fd28a"/><stop offset="1" stop-color="#86e05a"/></linearGradient></defs>
<path d="M859.0,185.0 Q866.0,176.0 873.0,185.0 Q866.0,194.0 859.0,185.0 Z" fill="#2e2e2e"/><circle cx="866.0" cy="185.0" r="3.24" fill="#ffffff"/><circle cx="866.0" cy="185.0" r="1.44" fill="#2e2e2e"/>
<rect x="866.6" y="191.2" width="8.4" height="4.6" rx="0.8" fill="#2e2e2e"/><rect x="869.3" y="189.9" width="3.0" height="1.6" fill="#2e2e2e"/><circle cx="870.8" cy="193.5" r="1.56" fill="#d8d8d8"/><circle cx="870.8" cy="193.5" r="0.83" fill="#2e2e2e"/>
<polygon points="873.0,177.1 878.2,177.1 878.2,182.29999999999998" fill="#1a8fe0"/>
<path d="M885.2,184.0 Q892.0,175.4 898.8,184.0 Q892.0,192.6 885.2,184.0 Z" fill="#9c9c9c"/><circle cx="892.0" cy="184.0" r="3.10" fill="#ffffff"/><circle cx="892.0" cy="184.0" r="1.38" fill="#9c9c9c"/>
<circle cx="896.6" cy="191.6" r="4" fill="#ececec" stroke="#b0b0b0" stroke-width="0.9"/><path d="M896.6,189.2 L896.6,191.8 L898.6,191.8" fill="none" stroke="#a0a0a0" stroke-width="0.8"/><polygon points="889.6,191.4 892.8,189.2 892.8,193.6" fill="#a8a8a8"/>
<polygon points="898.8,177.1 904,177.1 904,182.29999999999998" fill="#1a8fe0"/>
<rect x="911.8" y="181.2" width="13.8" height="13" fill="#fbfbfb" stroke="#a6abaf" stroke-width="0.9"/><rect x="912.2" y="181.5" width="13" height="1.2" fill="#b9bec2"/>
<path d="M921,190.2 L926,195.2" stroke="#9a9fa3" stroke-width="2.2"/><circle cx="918.2" cy="187.4" r="4" fill="#e4f4fb" stroke="#1f8fc8" stroke-width="1"/>
<path d="M947,190 L952,195" stroke="#9a9fa3" stroke-width="2.3"/><path d="M947.4,190.4 L951.6,194.6" stroke="#e8e8e8" stroke-width="0.8"/><circle cx="943" cy="186" r="5.4" fill="#eef8fc" stroke="#1f8fc8" stroke-width="1.1"/>
<path d="M940,186 L946,186" stroke="#14587a" stroke-width="1.8"/>
<path d="M943,183 L943,189" stroke="#14587a" stroke-width="1.8"/>
<path d="M973.1,190 L978.1,195" stroke="#9a9fa3" stroke-width="2.3"/><path d="M973.5,190.4 L977.7,194.6" stroke="#e8e8e8" stroke-width="0.8"/><circle cx="969.1" cy="186" r="5.4" fill="#eef8fc" stroke="#1f8fc8" stroke-width="1.1"/>
<path d="M966.1,186 L972.1,186" stroke="#14587a" stroke-width="1.8"/>
<rect x="989.6" y="181.2" width="15" height="14.2" fill="url(#gRep)" stroke="#a6abaf" stroke-width="0.8"/><rect x="990" y="181.5" width="14.2" height="1.3" fill="#b9bec2"/>
<path d="M990,187 Q996,183.4 1002,186.6 L994,195 L990,195 Z" fill="#ffffff" fill-opacity="0.9"/><path d="M992.4,195 L1002.6,186.2" stroke="#14587a" stroke-width="1.5"/>
<polygon points="1022.6,184.2 1025.6,180.6 1031.4,180.6 1031.4,190 1028.6,193 1022.6,193" fill="#d9d9d9"/><polygon points="1022.6,184.2 1025.6,180.6 1031.4,180.6 1028.6,184.2" fill="#f0f0f0"/><polygon points="1028.6,184.2 1031.4,180.6 1031.4,190 1028.6,193" fill="#b4b4b4"/>
<circle cx="1020.6" cy="190.8" r="5.2" fill="url(#gSphG)"/>
<polygon points="1033,195 1033,198 1030,198" fill="#555"/>
<polygon points="1041.4,185 1045.2,180.4 1057,180.4 1053.4,185" fill="#d9f1fa" stroke="#8ccbe8" stroke-width="0.6"/><polygon points="1053.4,185 1057,180.4 1057,191.2 1053.4,195.6" fill="#7ab8d8" stroke="#8ccbe8" stroke-width="0.6"/><rect x="1041.4" y="185" width="12" height="10.6" fill="#ffffff" stroke="#8ccbe8" stroke-width="0.9"/>
<polygon points="1059,195 1059,198 1056,198" fill="#555"/>
<polygon points="1081.2,177.6 1086.4,177.6 1086.4,182.79999999999998" fill="#1a8fe0"/>
<path d="M1067.2,180.8 L1075.4,180.8 Q1081.6,181.6 1082,191 M1067.2,184.2 L1071,184.2 Q1075.6,185 1076,190.8" fill="none" stroke="#3e4346" stroke-width="1"/><path d="M1070.6,184 L1073.4,181 M1076.6,190 L1081.4,185.4" stroke="#1f8fc8" stroke-width="0.9"/>
<path d="M1073.9,193.6 Q1078.4,188.4 1082.9,193.6 Q1078.4,198.8 1073.9,193.6 Z" fill="#2e2e2e"/><circle cx="1078.4" cy="193.6" r="1.87" fill="#ffffff"/><circle cx="1078.4" cy="193.6" r="0.83" fill="#2e2e2e"/>
<polygon points="1093.2,187.4 1097.2,180.6 1105.6,180.6 1109,186 1109,190 1105.2,194.8 1097,194.8" fill="#dff4fb" stroke="#5ab4dc" stroke-width="0.9"/><polygon points="1103.4,186.4 1106,180.8 1109,186 1109,189.4 1103.4,189.4" fill="#5aa3c4"/><path d="M1093.4,187.4 L1103.4,187.4 L1105.6,180.6" fill="none" stroke="#5ab4dc" stroke-width="0.7"/>
<rect x="1103.2" y="190" width="5.6" height="5.8" fill="#f2f2f2" stroke="#8c8c8c" stroke-width="0.7"/><rect x="1105" y="191.4" width="2" height="0.9" fill="#555"/><rect x="1105" y="193.4" width="2" height="0.9" fill="#555"/>
<polygon points="1111,195 1111,198 1108,198" fill="#555"/>
<rect x="1119.6" y="180.8" width="13.4" height="13.8" fill="#fafafa" stroke="#b0b0b0" stroke-width="0.8"/><path d="M1119.6,183.4 L1133,183.4 M1119.6,187 L1133,187 M1119.6,190.6 L1133,190.6 M1123.2,183.4 L1123.2,194.6" stroke="#b8b8b8" stroke-width="0.7"/><rect x="1120" y="191" width="3" height="3.2" fill="#cfe8f4"/>
<rect x="1124.8" y="190.2" width="10" height="5.6" rx="0.8" fill="#2e2e2e"/><rect x="1128.0" y="188.9" width="3.6" height="1.6" fill="#2e2e2e"/><circle cx="1129.8" cy="193.0" r="1.90" fill="#d8d8d8"/><circle cx="1129.8" cy="193.0" r="1.01" fill="#2e2e2e"/>
<polygon points="1145.2,182.6 1160.8,180.4 1159,195.6 1147.6,192.4" fill="#d0ecf7" stroke="#6db4d2" stroke-width="0.9"/><polygon points="1150,185.4 1156.4,184.6 1155.8,190.6 1150.8,189.6" fill="#f4fbfe" stroke="#6db4d2" stroke-width="0.6"/><path d="M1145.2,182.6 L1150,185.4 M1160.8,180.4 L1156.4,184.6 M1159,195.6 L1155.8,190.6 M1147.6,192.4 L1150.8,189.6" stroke="#6db4d2" stroke-width="0.6"/><polygon points="1150.8,189.6 1155.8,190.6 1159,195.6 1147.6,192.4" fill="#8fc6de"/>
<polygon points="1171.6,186.4 1176.4,180.4 1187,180.4 1187,182 1173,195.4 1171.6,195.4" fill="#e6f6fc"/><polygon points="1171.6,186.4 1176.4,180.4 1187,180.4 1182.6,186.4" fill="#bfe6f5"/><path d="M1187,182 L1187,191.6 L1182.8,195.6 L1173,195.6" fill="none" stroke="#8a8f92" stroke-width="0.7" stroke-dasharray="0.8 0.8"/><path d="M1171.6,195.6 L1187,180.4" stroke="#17648e" stroke-width="1.4"/>
<polygon points="1189,195 1189,198 1186,198" fill="#555"/>
<path d="M1197.4,180.6 L1201.4,184.6 M1201.4,180.6 L1197.4,184.6" stroke="#8c6a26" stroke-width="1.2"/><path d="M1206.8,180.2 L1199.6,195.6" stroke="#8c6a26" stroke-width="1.3" stroke-dasharray="3 2"/>
<path d="M1207.6,191.2 L1207.6,186.6 M1207.6,191.2 L1212.3999999999999,191.2 M1207.6,191.2 L1204.1999999999998,194.6" fill="none" stroke="#8c6a26" stroke-width="0.9"/>
<polygon points="1206.0,188.79999999999998 1207.6,185.79999999999998 1209.1999999999998,188.79999999999998" fill="#8c6a26"/>
<polygon points="1210.1999999999998,189.6 1213.1999999999998,191.2 1210.1999999999998,192.79999999999998" fill="#8c6a26"/>
<polygon points="1203.6,192.0 1203.6,195.2 1206.7999999999997,195.2" fill="#8c6a26"/>
<polygon points="1215,195 1215,198 1212,198" fill="#555"/>
<rect x="1223.6" y="180.6" width="9.2" height="5.6" fill="#fff4d8" stroke="#9aa0a4" stroke-width="0.8"/><path d="M1232.8,183.4 L1238.2,183.4 L1238.2,188" fill="none" stroke="#2e2e2e" stroke-width="1"/><polygon points="1235.6,186.6 1240.6,186.6 1238.2,189.6" fill="#2e2e2e"/>
<path d="M1230.0,193.6 Q1234.4,188.6 1238.8,193.6 Q1234.4,198.6 1230.0,193.6 Z" fill="#2e2e2e"/><circle cx="1234.4" cy="193.6" r="1.80" fill="#ffffff"/><circle cx="1234.4" cy="193.6" r="0.80" fill="#2e2e2e"/>
<path d="M1252.6,183.4 L1257.2,188.4 L1262.4,188.4 M1257.2,188.4 L1252.6,193.8" fill="none" stroke="#3a3a3a" stroke-width="0.9"/><circle cx="1252.6" cy="183.4" r="2.5" fill="#6fb86a"/><circle cx="1262.6" cy="188.4" r="2.5" fill="#e86a6a"/><circle cx="1252.6" cy="193.8" r="2.5" fill="#3d8fb8"/>
<path d="M1283,181.6 L1290.4,194.4 L1275.6,194.4 Z" fill="none" stroke="#b4b4b4" stroke-width="2.6" stroke-linejoin="round"/><polygon points="1286.4,190.6 1291.4,193.2 1286.4,195.8" fill="#d8d8d8" stroke="#b4b4b4" stroke-width="0.6"/>
<rect x="1303.2" y="182.2" width="4.2" height="10.8" fill="#a4a4a4"/><rect x="1310" y="182.2" width="4.2" height="10.8" fill="#a4a4a4"/>
<path d="M1327.6,182.2 L1343.2,182.2 L1343.2,192.8 L1329.6,192.8 Q1333.4,190.6 1333.2,187.4 Q1332.8,184.4 1327.6,183.8 Z" fill="#cfcfcf"/>
<rect x="9.4" y="1016.4" width="15.4" height="12" fill="#f4f4f4" stroke="#8c9094" stroke-width="0.9"/><rect x="9.9" y="1016.9" width="14.4" height="2.4" fill="#ffffff"/><path d="M9.4,1019.8 L24.8,1019.8" stroke="#8c9094" stroke-width="0.9"/>
<rect x="9.6" y="1020.4" width="4.8" height="11.2" fill="url(#gStat)" stroke="#1c6f9c" stroke-width="1.1"/>
<path d="M16.1,1029.5 Q20.5,1024.1 24.9,1029.5 Q20.5,1034.9 16.1,1029.5 Z" fill="#2e2e2e"/><circle cx="20.5" cy="1029.5" r="1.94" fill="#ffffff"/><circle cx="20.5" cy="1029.5" r="0.86" fill="#2e2e2e"/>
<circle cx="43.4" cy="1023.8" r="7" fill="url(#gGlobe)"/><path d="M40,1021 Q42.4,1019 44.6,1020.6 Q44,1023 41.4,1023.6 Z M44.6,1024.4 Q47.4,1023.4 48,1026 Q46.4,1028.6 44.6,1028 Z" fill="#9fdcff" opacity="0.55"/><path d="M37.2,1029.6 Q33.6,1028.6 38.6,1022.2 Q44.6,1015.6 49.8,1016 Q52.6,1016.8 50.4,1021" fill="none" stroke="#3a3f44" stroke-width="1" transform="rotate(0)"/><path d="M50.4,1021 Q49,1024 45,1027.4 Q40.6,1030.6 37.2,1029.6" fill="none" stroke="#3a3f44" stroke-width="0.9" opacity="0.55"/>
<rect x="61.4" y="1016.4" width="15.2" height="15.2" rx="1.4" fill="url(#gStat)" stroke="#1c7fa8" stroke-width="1.2"/>
<defs><linearGradient id="gBin" x1="0" y1="0" x2="1" y2="0"><stop offset="0" stop-color="#3a3a3a"/><stop offset="0.45" stop-color="#8e8e8e"/><stop offset="1" stop-color="#303030"/></linearGradient></defs>
<path d="M1547.8,1017.2 L1551,1017.2 L1551.4,1020 L1551.4,1031.6 L1544.4,1031.6 L1545,1024.6 Z" fill="url(#gBin)"/><path d="M1553.2,1017.2 L1556.6,1017.2 L1559.4,1024.6 L1560.2,1031.6 L1554.8,1031.6 L1553,1026 Z" fill="url(#gBin)"/><rect x="1550.8" y="1021" width="3" height="6.4" fill="#4a4a4a"/><rect x="1544.4" y="1030" width="4.6" height="1.6" fill="#222"/><rect x="1555" y="1030" width="5.2" height="1.6" fill="#222"/>
<polygon points="1566.7,1021.5 1574.1,1021.5 1570.4,1025.3" fill="#55595c"/>
<rect x="1587.4" y="1018.4" width="14" height="10.4" fill="none" stroke="#3a3a3a" stroke-width="1.1" stroke-dasharray="3.4 2"/>
<polygon points="1609.6,1021.5 1617.0,1021.5 1613.3,1025.3" fill="#55595c"/>
<rect x="1627.4" y="1016.4" width="15.6" height="15.2" fill="#d6f0fb" stroke="#14587a" stroke-width="1.1" stroke-dasharray="2.6 1.6"/>
<path d="M1628.1,1020.6 Q1632.4,1015.6 1636.7,1020.6 Q1632.4,1025.6 1628.1,1020.6 Z" fill="#3a3a3a"/><circle cx="1632.4" cy="1020.6" r="1.80" fill="#ffffff"/><circle cx="1632.4" cy="1020.6" r="0.80" fill="#3a3a3a"/>
<path d="M1636.4,1022.6 L1636.8,1031.4 L1642.6,1028.6 Z" fill="#eef6fa" stroke="#55595c" stroke-width="0.9" stroke-linejoin="round"/>
<polygon points="1890.1,1021.7 1897.5,1021.7 1893.8,1025.5" fill="#55595c"/>
<path d="M15.6,1054.4 L22.4,1053.4 L22.4,1059.4 L15.6,1059.4 Z M23.4,1053.2 L32.3,1051.9 L32.3,1059.4 L23.4,1059.4 Z M15.6,1060.4 L22.4,1060.4 L22.4,1066.4 L15.6,1065.4 Z M23.4,1060.4 L32.3,1060.4 L32.3,1067.8 L23.4,1066.6 Z" fill="#ffffff"/>
<circle cx="70" cy="1058.4" r="5.2" fill="none" stroke="#1e1e1e" stroke-width="1.4"/><path d="M66.4,1062.2 L60.4,1067.8" stroke="#1e1e1e" stroke-width="1.5"/>
<path d="M408,1052.6 L408,1054.6 M408,1053.4 L421,1053.4 M421,1052.6 L421,1054.6 M408,1064.8 L408,1066.8 M408,1066 L421,1066 M421,1064.8 L421,1066.8" stroke="#fff" stroke-width="1.1" fill="none"/><rect x="409.6" y="1056.6" width="9.6" height="6.8" fill="none" stroke="#fff" stroke-width="1.2"/><path d="M423.2,1052.4 L423.2,1055.4 M423.2,1060.4 L423.2,1066.8" stroke="#fff" stroke-width="1.1"/><rect x="421.8" y="1056.6" width="2.6" height="2.6" fill="#fff"/>
<circle cx="467.2" cy="1060" r="12" fill="url(#gEdge)"/><path d="M455.6,1057.4 Q458,1048 467.6,1048 Q476.6,1048.4 479.2,1057 Q479.8,1062.6 474,1063.4 L468,1063.4 Q470.6,1059.6 467.2,1056.8 Q462.6,1054.2 458.8,1058.4 Q456,1062.4 458.4,1068 Q454.6,1063.6 455.6,1057.4 Z" fill="url(#gEdge2)"/><path d="M462.4,1058.4 Q459.6,1063.6 464,1068.6 Q468.6,1072 474.4,1069.6 Q470.6,1069.4 468.4,1066.4 Q467,1064 468,1063.4 Q465.4,1061.4 465.8,1058.6 Z" fill="#0c4f96" opacity="0.8"/>
<path d="M505.2,1053 L505.2,1051.4 L513.4,1051.4 L514.8,1053 Z" fill="#e8a820"/><rect x="505.2" y="1052.8" width="21.4" height="15.4" fill="#ffd866"/><rect x="505.2" y="1052.8" width="21.4" height="2.2" fill="#f9c846"/><path d="M509.4,1068.2 L509.4,1061.4 L522.4,1061.4 L522.4,1068.2 L519.2,1068.2 L519.2,1064.4 L512.6,1064.4 L512.6,1068.2 Z" fill="#4a9fe8"/>
<circle cx="565" cy="1060" r="12" fill="#fbc116"/><path d="M565,1060 L554.6,1054 A12,12 0 0 1 575.4,1054 Z" fill="#e33b2e"/><path d="M565,1048 A12,12 0 0 1 575.4,1054 L565,1054 Z" fill="#e33b2e"/><path d="M554.6,1054 A12,12 0 0 0 560.6,1071.2 L566.4,1061 L560,1060 Z" fill="#2da94f"/><path d="M554.6,1054 L560.4,1064 L565,1060 Z" fill="#2da94f"/><circle cx="565" cy="1060" r="5.5" fill="#ffffff"/><circle cx="565" cy="1060" r="4.3" fill="#4285f4"/>
<rect x="602.2" y="1048.2" width="23.4" height="23.6" fill="#ffffff"/><path d="M606,1052.2 L611.4,1052.2 L611.4,1062.4 L621.6,1062.4 L621.6,1067.8 L606,1067.8 Z" fill="#e1e1e1" stroke="#9a9a9a" stroke-width="0.6"/><rect x="611.4" y="1052.2" width="10.2" height="10.2" fill="#0a8ad6"/>
<path d="M1737.2,1062.9 L1743.1,1057.2 L1749,1062.9" fill="none" stroke="#fff" stroke-width="1.3"/>
<rect x="1762.4" y="1054.8" width="12" height="8.8" fill="none" stroke="#fff" stroke-width="1.1"/><path d="M1768.4,1063.6 L1768.4,1066.2 M1764.6,1066.4 L1772.2,1066.4 M1761.6,1054.6 L1761.6,1066.6" stroke="#fff" stroke-width="1.1"/><rect x="1759.4" y="1054.8" width="4.2" height="3.6" fill="#1c2947" stroke="#fff" stroke-width="0.9"/>
<path d="M1783.4,1057.8 L1785.8,1057.8 L1789,1054.6 L1789,1065.6 L1785.8,1062.4 L1783.4,1062.4 Z" fill="none" stroke="#fff" stroke-width="1"/><path d="M1791.4,1057.6 Q1793.2,1060 1791.4,1062.6 M1793.8,1055.6 Q1796.8,1060 1793.8,1064.6 M1796.2,1053.6 Q1800.4,1060 1796.2,1066.6" fill="none" stroke="#fff" stroke-width="1"/>
<path d="M1879.8,1052.8 L1894.2,1052.8 L1894.2,1064.6 L1889.6,1064.6 L1887,1067.2 L1884.4,1064.6 L1879.8,1064.6 Z" fill="none" stroke="#fff" stroke-width="1.2"/>
</svg>
</div>
</body></html>
